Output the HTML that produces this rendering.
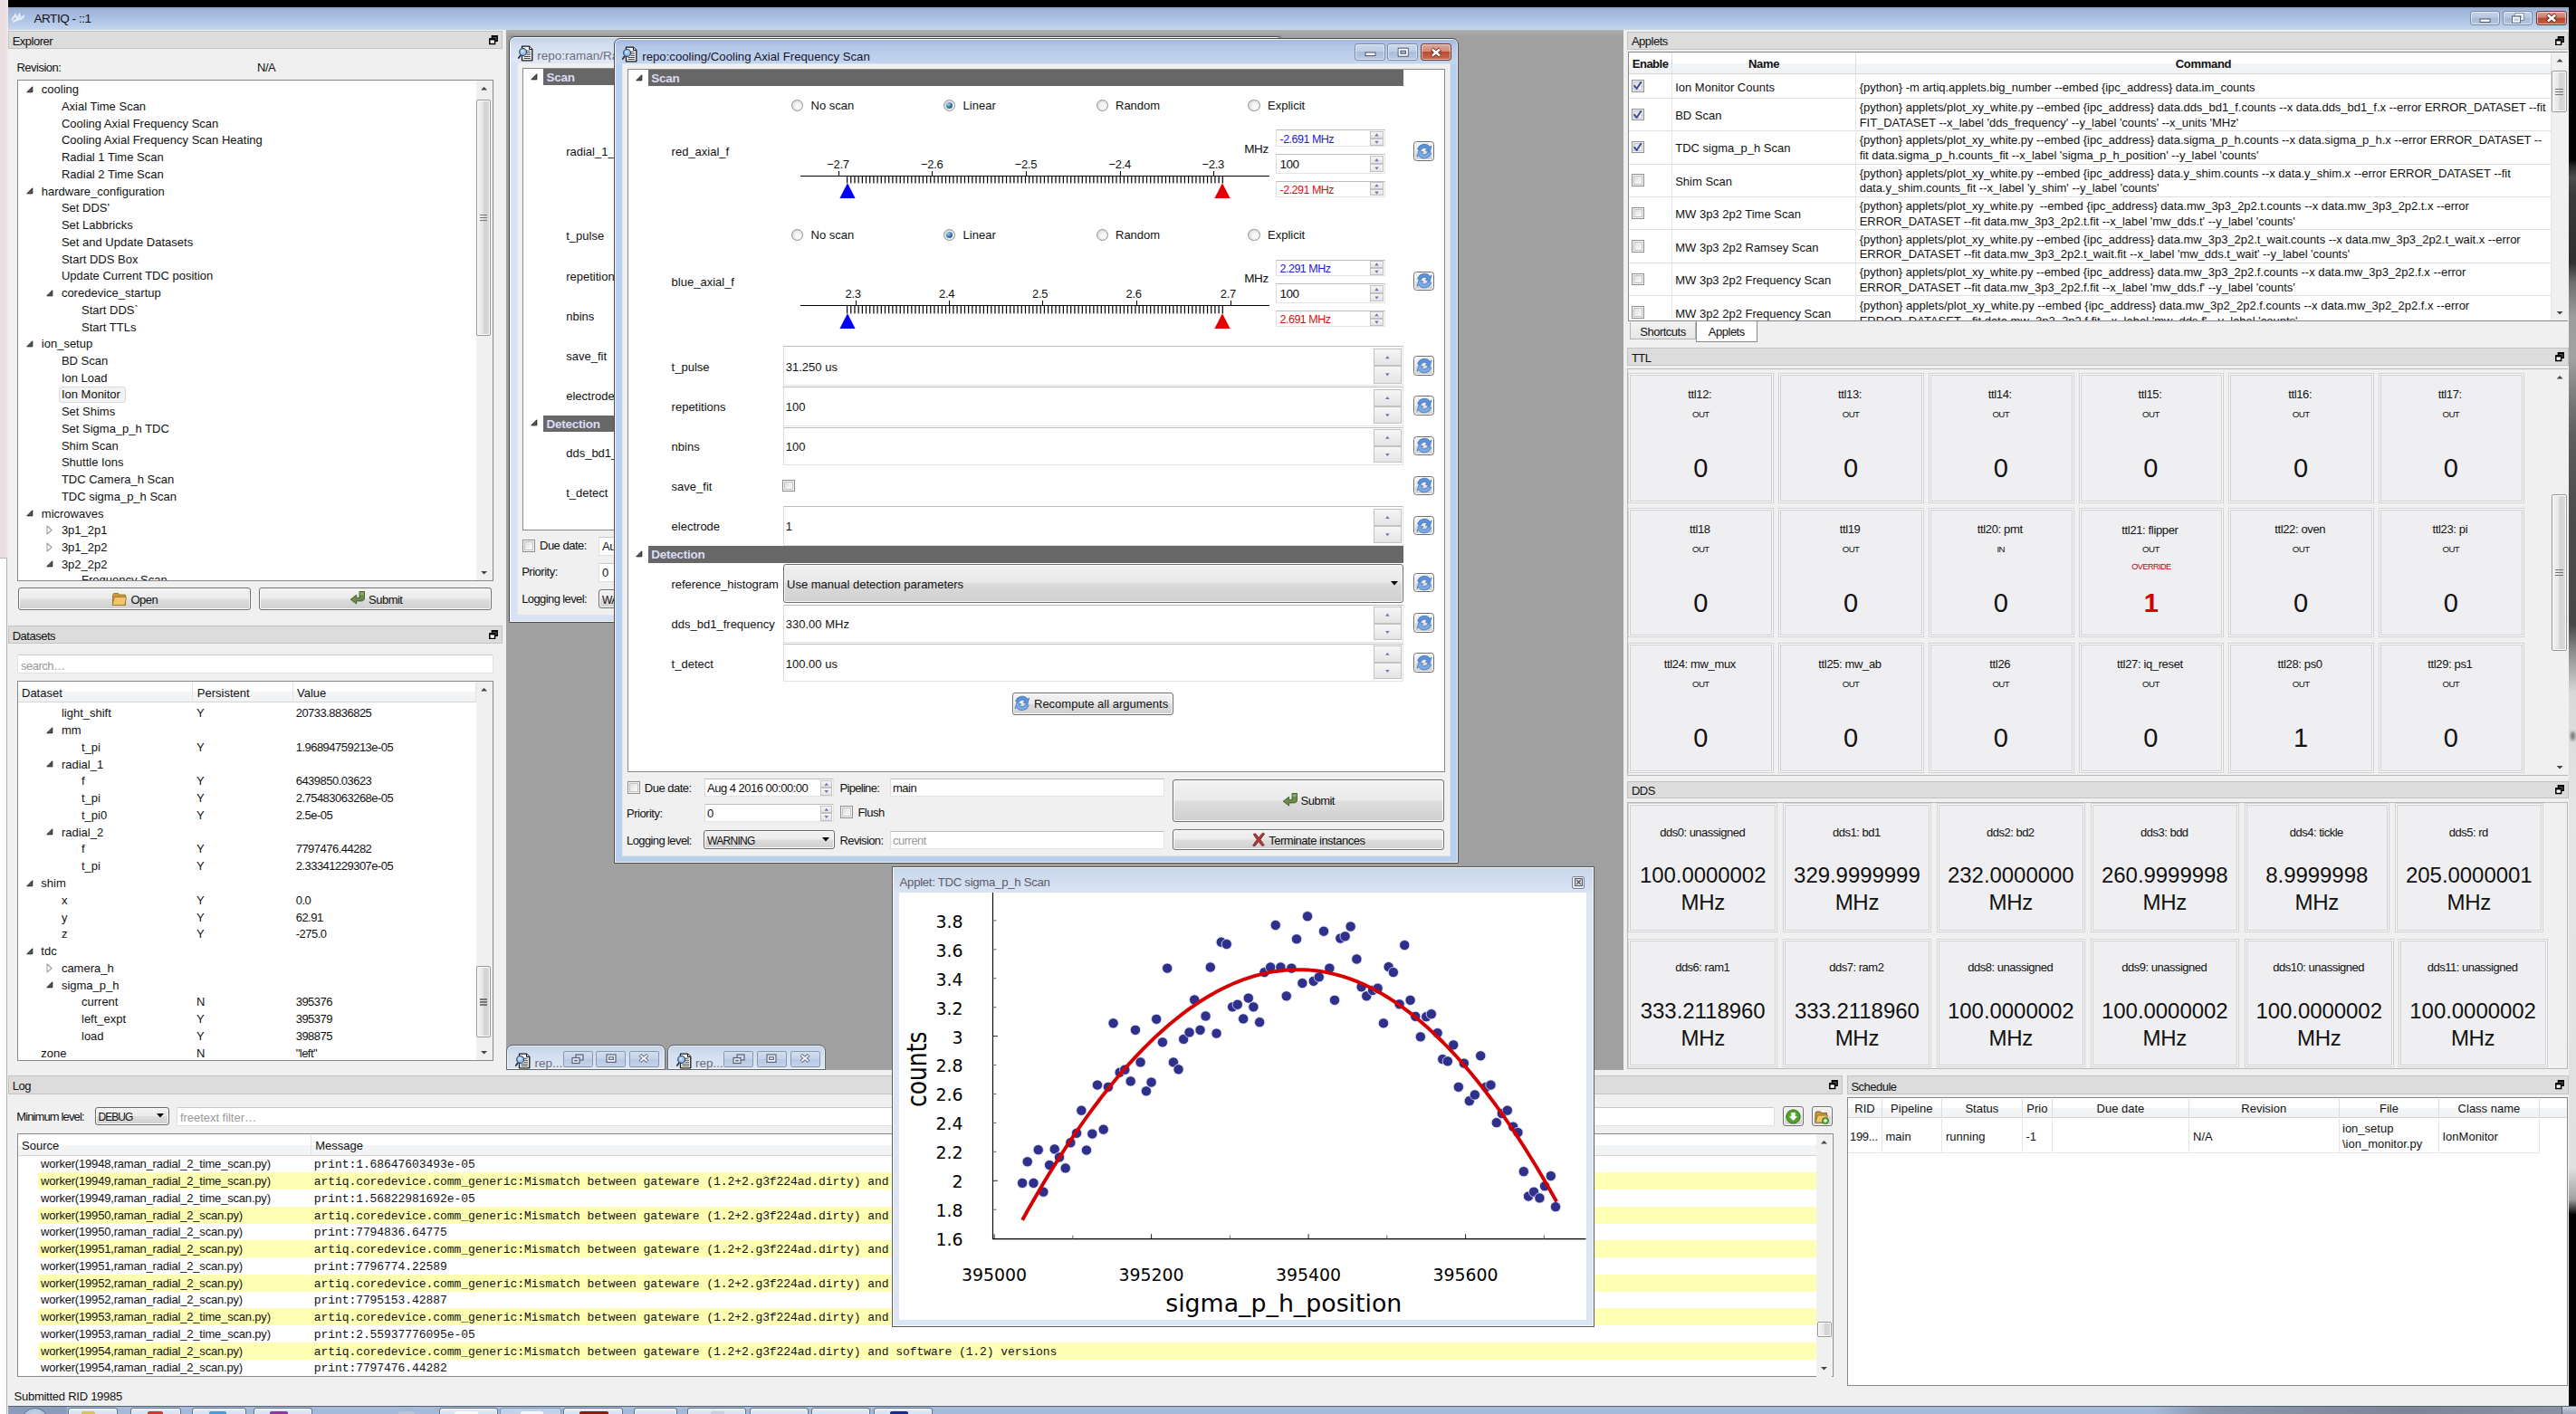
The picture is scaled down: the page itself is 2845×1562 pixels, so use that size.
<!DOCTYPE html><html><head><meta charset="utf-8"><title>ARTIQ - ::1</title><style>
html,body{margin:0;padding:0}
body{width:2845px;height:1562px;overflow:hidden;background:#f0f0f0;position:relative;font-family:"Liberation Sans",sans-serif}
body *{position:absolute;box-sizing:border-box}
svg *{position:static}
span{white-space:pre;line-height:20px;color:#111}
.s{font:13px "Liberation Sans",sans-serif;line-height:20px}
.sb{font:bold 13px "Liberation Sans",sans-serif;line-height:20px}
.t{font:13px "Liberation Sans",sans-serif;line-height:20px;letter-spacing:-0.5px}
.m{font:13px "Liberation Mono",monospace;line-height:20px;letter-spacing:-0.06px;margin-top:1px}
.c{text-align:center}.r{text-align:right}
.pt{font:18.9px "DejaVu Sans","Liberation Sans",sans-serif;fill:#000}
.pl{font:26.8px "DejaVu Sans","Liberation Sans",sans-serif;fill:#000}
</style></head><body><div style="left:9px;top:0px;width:2836px;height:8.3px;background:#000"></div>
<div style="left:0px;top:0px;width:9.2px;height:616.2px;background:linear-gradient(90deg,#ecdfe2 0,#ecdfe2 6.8px,#f0eaec 8.6px,#f0f0f0 9.2px)"></div>
<div style="left:0px;top:616.2px;width:7.6px;height:945.8px;background:#fff;border-top:1px solid #b8b8b8;border-right:1px solid #b0b0b0"></div>
<div style="left:2837px;top:0px;width:8px;height:1562px;background:linear-gradient(#000 0,#000 176px,#262626 183px,#4c4c4c 196px,#3a3a3a 215px,#2e2e2e 290px,#6e6e6e 312px,#9c9c9c 350px,#a2a2a2 395px,#828282 430px,#5e5e5e 480px,#4c4c4c 560px,#474747 690px,#8c8c8c 720px,#d8d8d8 765px,#e6e6e6 900px,#e0e0e0 1290px,#a0a0a0 1325px,#000 1342px,#000 1553px)"></div>
<div style="left:2838.5px;top:808px;width:5px;height:10px;background:#777;border-radius:50%;filter:blur(1.5px)"></div>
<div style="left:9px;top:8.3px;width:2828px;height:24.5px;background:linear-gradient(#8fa2c0 0,#9fb4d6 12%,#a9bfe2 45%,#b6cbe9 75%,#c6d7ee 100%)"></div>
<svg style="left:12px;top:13px;" width="16" height="14" viewBox="0 0 16 14"><path d="M1 9L5 3.5L7 8L9.5 3L11 8L15 4M2 11L14 6" fill="none" stroke="#f4f7fc" stroke-width="1.9" opacity=".8" style="filter:blur(.5px)"/></svg>
<span class="s" style="left:37.5px;top:10.5px;font-size:13.5px;letter-spacing:-0.45px;color:#111">ARTIQ - ::1</span>
<div style="left:2728.4px;top:11.6px;width:32.8px;height:16.6px;border:1px solid #7d8ba6;border-radius:3px;background:linear-gradient(#c5d3e8 0,#b9c9e2 45%,#a5b8d6 50%,#b4c6e0 100%);box-shadow:inset 0 0 0 1px rgba(255,255,255,.55)"></div>
<div style="left:2764.4px;top:11.6px;width:32.8px;height:16.6px;border:1px solid #7d8ba6;border-radius:3px;background:linear-gradient(#c5d3e8 0,#b9c9e2 45%,#a5b8d6 50%,#b4c6e0 100%);box-shadow:inset 0 0 0 1px rgba(255,255,255,.55)"></div>
<div style="left:2801px;top:11.6px;width:33.6px;height:16.6px;border:1px solid #6b3a32;border-radius:3px;background:linear-gradient(#d9a195 0,#cf7f6c 45%,#b9432a 50%,#c5604a 100%);box-shadow:inset 0 0 0 1px rgba(255,255,255,.55)"></div>
<svg style="left:2738px;top:20px;" width="14" height="6" viewBox="0 0 14 6"><rect x="1" y="1" width="11" height="3.4" fill="#fff" stroke="#4a5568" stroke-width="1"/></svg>
<svg style="left:2773px;top:14px;" width="16" height="12" viewBox="0 0 16 12"><rect x="5" y="1" width="9" height="7" fill="none" stroke="#4a5568" stroke-width="1"/><rect x="5.8" y="1.8" width="7.4" height="5.4" fill="none" stroke="#fff" stroke-width="1.4"/><rect x="1.5" y="4" width="9" height="7" fill="#b6c7e0" stroke="#4a5568" stroke-width="1"/><rect x="2.7" y="5.6" width="6.6" height="4.2" fill="none" stroke="#fff" stroke-width="1.6"/></svg>
<svg style="left:2811px;top:14px;" width="14" height="12" viewBox="0 0 14 12"><path d="M2.4 2.2L11.6 9.8M11.6 2.2L2.4 9.8" stroke="#6a2c20" stroke-width="4.4" stroke-linecap="butt"/><path d="M2.9 2.6L11.1 9.4M11.1 2.6L2.9 9.4" stroke="#fff" stroke-width="2.6" stroke-linecap="butt"/></svg>
<div style="left:9.2px;top:34.3px;width:545.4px;height:20.2px;background:#dcdcdc;border:1px solid #c3c3c3"></div>
<span class="t" style="left:13.7px;top:35.7px;">Explorer</span>
<svg style="left:539.8px;top:39.1px;" width="10" height="10.5" viewBox="0 0 10 10.5"><rect x="3.4" y="0.7" width="5.8" height="5.6" fill="#555" stroke="#000" stroke-width="1.4"/><rect x="3.4" y="0.4" width="5.8" height="1.6" fill="#000"/><rect x="0.8" y="3.9" width="5.8" height="5.6" fill="#fff" stroke="#000" stroke-width="1.5"/><rect x="0.8" y="3.4" width="5.8" height="2" fill="#000"/></svg>
<span class="t" style="left:18.4px;top:64.8px;">Revision:</span>
<span class="t" style="left:284px;top:64.8px;">N/A</span>
<div style="left:19.2px;top:88.3px;width:526px;height:553.5px;background:#fff;border:1px solid #868a90;overflow:hidden"></div>
<svg style="left:28.5px;top:95px;" width="8" height="8" viewBox="0 0 8 8"><path d="M6.8 0.8V6.8H0.8Z" fill="#555" stroke="#222" stroke-width="1" stroke-linejoin="round"/></svg>
<span class="s" style="left:45.8px;top:89.3px;">cooling</span>
<span class="s" style="left:67.9px;top:108.03px;">Axial Time Scan</span>
<span class="s" style="left:67.9px;top:126.76px;">Cooling Axial Frequency Scan</span>
<span class="s" style="left:67.9px;top:145.49px;">Cooling Axial Frequency Scan Heating</span>
<span class="s" style="left:67.9px;top:164.22px;">Radial 1 Time Scan</span>
<span class="s" style="left:67.9px;top:182.95px;">Radial 2 Time Scan</span>
<svg style="left:28.5px;top:207.38px;" width="8" height="8" viewBox="0 0 8 8"><path d="M6.8 0.8V6.8H0.8Z" fill="#555" stroke="#222" stroke-width="1" stroke-linejoin="round"/></svg>
<span class="s" style="left:45.8px;top:201.68px;">hardware_configuration</span>
<span class="s" style="left:67.9px;top:220.41px;">Set DDS'</span>
<span class="s" style="left:67.9px;top:239.14px;">Set Labbricks</span>
<span class="s" style="left:67.9px;top:257.87px;">Set and Update Datasets</span>
<span class="s" style="left:67.9px;top:276.6px;">Start DDS Box</span>
<span class="s" style="left:67.9px;top:295.33px;">Update Current TDC position</span>
<svg style="left:50.6px;top:319.76px;" width="8" height="8" viewBox="0 0 8 8"><path d="M6.8 0.8V6.8H0.8Z" fill="#555" stroke="#222" stroke-width="1" stroke-linejoin="round"/></svg>
<span class="s" style="left:67.9px;top:314.06px;">coredevice_startup</span>
<span class="s" style="left:90px;top:332.79px;">Start DDS`</span>
<span class="s" style="left:90px;top:351.52px;">Start TTLs</span>
<svg style="left:28.5px;top:375.95px;" width="8" height="8" viewBox="0 0 8 8"><path d="M6.8 0.8V6.8H0.8Z" fill="#555" stroke="#222" stroke-width="1" stroke-linejoin="round"/></svg>
<span class="s" style="left:45.8px;top:370.25px;">ion_setup</span>
<span class="s" style="left:67.9px;top:388.98px;">BD Scan</span>
<span class="s" style="left:67.9px;top:407.71px;">Ion Load</span>
<div style="left:64.5px;top:427.4px;width:74.5px;height:17.2px;background:#f3f3f3;border:1px solid #dadada;border-radius:3px"></div>
<span class="s" style="left:67.9px;top:426.44px;">Ion Monitor</span>
<span class="s" style="left:67.9px;top:445.17px;">Set Shims</span>
<span class="s" style="left:67.9px;top:463.9px;">Set Sigma_p_h TDC</span>
<span class="s" style="left:67.9px;top:482.63px;">Shim Scan</span>
<span class="s" style="left:67.9px;top:501.36px;">Shuttle Ions</span>
<span class="s" style="left:67.9px;top:520.09px;">TDC Camera_h Scan</span>
<span class="s" style="left:67.9px;top:538.82px;">TDC sigma_p_h Scan</span>
<svg style="left:28.5px;top:563.25px;" width="8" height="8" viewBox="0 0 8 8"><path d="M6.8 0.8V6.8H0.8Z" fill="#555" stroke="#222" stroke-width="1" stroke-linejoin="round"/></svg>
<span class="s" style="left:45.8px;top:557.55px;">microwaves</span>
<svg style="left:51.4px;top:580.48px;" width="7" height="11" viewBox="0 0 7 11"><path d="M1 1L6 5.5L1 10Z" fill="#fff" stroke="#a0a0a0" stroke-width="1.1" stroke-linejoin="round"/></svg>
<span class="s" style="left:67.9px;top:576.28px;">3p1_2p1</span>
<svg style="left:51.4px;top:599.21px;" width="7" height="11" viewBox="0 0 7 11"><path d="M1 1L6 5.5L1 10Z" fill="#fff" stroke="#a0a0a0" stroke-width="1.1" stroke-linejoin="round"/></svg>
<span class="s" style="left:67.9px;top:595.01px;">3p1_2p2</span>
<svg style="left:50.6px;top:619.44px;" width="8" height="8" viewBox="0 0 8 8"><path d="M6.8 0.8V6.8H0.8Z" fill="#555" stroke="#222" stroke-width="1" stroke-linejoin="round"/></svg>
<span class="s" style="left:67.9px;top:613.74px;">3p2_2p2</span>
<div style="left:80px;top:632px;width:200px;height:8.7px;overflow:hidden"><span class="s" style="left:10px;top:-1px">Frequency Scan</span></div>
<div style="left:526.4px;top:89.3px;width:17.8px;height:551.5px;background:#f0f0f0"></div>
<svg style="left:526.4px;top:89.3px;" width="17.8" height="17" viewBox="0 0 17.8 17"><path d="M5.1000000000000005 10.5L8.6 7L12.100000000000001 10.5Z" fill="#444"/></svg>
<svg style="left:526.4px;top:623.8px;" width="17.8" height="17" viewBox="0 0 17.8 17"><path d="M5.1000000000000005 7L8.6 10.5L12.100000000000001 7Z" fill="#444"/></svg>
<div style="left:526.4px;top:109.8px;width:15.4px;height:261.2px;border:1px solid #979797;border-radius:2px;background:linear-gradient(90deg,#f3f3f3,#e6e6e6 45%,#d2d2d2 55%,#dadada);box-shadow:inset 0 0 0 1px #fff"></div>
<div style="left:530.2px;top:236.9px;width:7.8px;height:1.2px;background:#777"></div>
<div style="left:530.2px;top:239.9px;width:7.8px;height:1.2px;background:#777"></div>
<div style="left:530.2px;top:242.9px;width:7.8px;height:1.2px;background:#777"></div>
<div style="left:20.1px;top:649.3px;width:256.7px;height:24.3px;border:1px solid #707070;border-radius:3px;background:linear-gradient(#f2f2f2,#ebebeb 48%,#dddddd 52%,#cfcfcf);box-shadow:inset 0 0 0 1px #fcfcfc;"></div>
<svg style="left:123px;top:652.5px;" width="18" height="17" viewBox="0 0 18 17"><path d="M1.5 4.5l1.2-2h5l1 1.5h6.8v11.5h-14z" fill="#c99a3c" stroke="#8a6a22" stroke-width=".8"/><path d="M1.2 15.5L3.2 6.5h13.3l-1.8 9z" fill="#f0c566" stroke="#9a7424" stroke-width=".8"/></svg>
<span class="t" style="left:144.5px;top:653px;">Open</span>
<div style="left:286.3px;top:649.3px;width:256.9px;height:24.3px;border:1px solid #707070;border-radius:3px;background:linear-gradient(#f2f2f2,#ebebeb 48%,#dddddd 52%,#cfcfcf);box-shadow:inset 0 0 0 1px #fcfcfc;"></div>
<svg style="left:386px;top:652.3px;" width="18" height="17" viewBox="0 0 18 17"><path d="M11 1.5h5.5v7.2c0 2-1.2 3.2-3.2 3.2H7.6v3.2L1.2 10.2l6.4-5v3.2h3.4z" fill="#6b8c4a" stroke="#3f5a28" stroke-width=".9" stroke-linejoin="round"/><path d="M11.6 2.2h4.2v3h-4.2z" fill="#9ab87a" opacity=".7"/></svg>
<span class="t" style="left:407px;top:653px;">Submit</span>
<div style="left:9.2px;top:690.9px;width:545.4px;height:19.7px;background:#dcdcdc;border:1px solid #c3c3c3"></div>
<span class="t" style="left:13.7px;top:692.75px;">Datasets</span>
<svg style="left:539.8px;top:695.7px;" width="10" height="10.5" viewBox="0 0 10 10.5"><rect x="3.4" y="0.7" width="5.8" height="5.6" fill="#555" stroke="#000" stroke-width="1.4"/><rect x="3.4" y="0.4" width="5.8" height="1.6" fill="#000"/><rect x="0.8" y="3.9" width="5.8" height="5.6" fill="#fff" stroke="#000" stroke-width="1.5"/><rect x="0.8" y="3.4" width="5.8" height="2" fill="#000"/></svg>
<div style="left:19.2px;top:723.3px;width:525.8px;height:21.2px;background:#fff;border:1px solid #e0e0e0;border-top-color:#c8c8c8;border-radius:2px"></div>
<span class="t" style="left:23px;top:726px;color:#9a9a9a">search…</span>
<div style="left:19.2px;top:752.2px;width:526px;height:419.7px;background:#fff;border:1px solid #868a90"></div>
<div style="left:20.2px;top:753.2px;width:506px;height:23.2px;background:linear-gradient(#fff,#fff 50%,#f4f5f7 51%,#f1f2f4);border-bottom:1px solid #d5d5d5"></div>
<div style="left:212px;top:754px;width:1px;height:22px;background:#e3e4e6"></div>
<div style="left:323.3px;top:754px;width:1px;height:22px;background:#e3e4e6"></div>
<div style="left:524.5px;top:754px;width:1px;height:22px;background:#e3e4e6"></div>
<span class="s" style="left:24px;top:756px;">Dataset</span>
<span class="s" style="left:217.8px;top:756px;">Persistent</span>
<span class="s" style="left:328px;top:756px;">Value</span>
<span class="s" style="left:67.9px;top:778.4px;">light_shift</span>
<span class="s" style="left:217px;top:778.4px;">Y</span>
<span class="s" style="left:326.7px;top:778.4px;letter-spacing:-0.52px">20733.8836825</span>
<svg style="left:50.6px;top:802.86px;" width="8" height="8" viewBox="0 0 8 8"><path d="M6.8 0.8V6.8H0.8Z" fill="#555" stroke="#222" stroke-width="1" stroke-linejoin="round"/></svg>
<span class="s" style="left:67.9px;top:797.16px;">mm</span>
<span class="s" style="left:90px;top:815.92px;">t_pi</span>
<span class="s" style="left:217px;top:815.92px;">Y</span>
<span class="s" style="left:326.7px;top:815.92px;letter-spacing:-0.52px">1.96894759213e-05</span>
<svg style="left:50.6px;top:840.38px;" width="8" height="8" viewBox="0 0 8 8"><path d="M6.8 0.8V6.8H0.8Z" fill="#555" stroke="#222" stroke-width="1" stroke-linejoin="round"/></svg>
<span class="s" style="left:67.9px;top:834.68px;">radial_1</span>
<span class="s" style="left:90px;top:853.44px;">f</span>
<span class="s" style="left:217px;top:853.44px;">Y</span>
<span class="s" style="left:326.7px;top:853.44px;letter-spacing:-0.52px">6439850.03623</span>
<span class="s" style="left:90px;top:872.2px;">t_pi</span>
<span class="s" style="left:217px;top:872.2px;">Y</span>
<span class="s" style="left:326.7px;top:872.2px;letter-spacing:-0.52px">2.75483063268e-05</span>
<span class="s" style="left:90px;top:890.96px;">t_pi0</span>
<span class="s" style="left:217px;top:890.96px;">Y</span>
<span class="s" style="left:326.7px;top:890.96px;letter-spacing:-0.52px">2.5e-05</span>
<svg style="left:50.6px;top:915.42px;" width="8" height="8" viewBox="0 0 8 8"><path d="M6.8 0.8V6.8H0.8Z" fill="#555" stroke="#222" stroke-width="1" stroke-linejoin="round"/></svg>
<span class="s" style="left:67.9px;top:909.72px;">radial_2</span>
<span class="s" style="left:90px;top:928.48px;">f</span>
<span class="s" style="left:217px;top:928.48px;">Y</span>
<span class="s" style="left:326.7px;top:928.48px;letter-spacing:-0.52px">7797476.44282</span>
<span class="s" style="left:90px;top:947.24px;">t_pi</span>
<span class="s" style="left:217px;top:947.24px;">Y</span>
<span class="s" style="left:326.7px;top:947.24px;letter-spacing:-0.52px">2.33341229307e-05</span>
<svg style="left:28.5px;top:971.7px;" width="8" height="8" viewBox="0 0 8 8"><path d="M6.8 0.8V6.8H0.8Z" fill="#555" stroke="#222" stroke-width="1" stroke-linejoin="round"/></svg>
<span class="s" style="left:45.3px;top:966px;">shim</span>
<span class="s" style="left:67.9px;top:984.76px;">x</span>
<span class="s" style="left:217px;top:984.76px;">Y</span>
<span class="s" style="left:326.7px;top:984.76px;letter-spacing:-0.52px">0.0</span>
<span class="s" style="left:67.9px;top:1003.52px;">y</span>
<span class="s" style="left:217px;top:1003.52px;">Y</span>
<span class="s" style="left:326.7px;top:1003.52px;letter-spacing:-0.52px">62.91</span>
<span class="s" style="left:67.9px;top:1022.28px;">z</span>
<span class="s" style="left:217px;top:1022.28px;">Y</span>
<span class="s" style="left:326.7px;top:1022.28px;letter-spacing:-0.52px">-275.0</span>
<svg style="left:28.5px;top:1046.74px;" width="8" height="8" viewBox="0 0 8 8"><path d="M6.8 0.8V6.8H0.8Z" fill="#555" stroke="#222" stroke-width="1" stroke-linejoin="round"/></svg>
<span class="s" style="left:45.3px;top:1041.04px;">tdc</span>
<svg style="left:51.4px;top:1064px;" width="7" height="11" viewBox="0 0 7 11"><path d="M1 1L6 5.5L1 10Z" fill="#fff" stroke="#a0a0a0" stroke-width="1.1" stroke-linejoin="round"/></svg>
<span class="s" style="left:67.9px;top:1059.8px;">camera_h</span>
<svg style="left:50.6px;top:1084.26px;" width="8" height="8" viewBox="0 0 8 8"><path d="M6.8 0.8V6.8H0.8Z" fill="#555" stroke="#222" stroke-width="1" stroke-linejoin="round"/></svg>
<span class="s" style="left:67.9px;top:1078.56px;">sigma_p_h</span>
<span class="s" style="left:90px;top:1097.32px;">current</span>
<span class="s" style="left:217px;top:1097.32px;">N</span>
<span class="s" style="left:326.7px;top:1097.32px;letter-spacing:-0.52px">395376</span>
<span class="s" style="left:90px;top:1116.08px;">left_expt</span>
<span class="s" style="left:217px;top:1116.08px;">Y</span>
<span class="s" style="left:326.7px;top:1116.08px;letter-spacing:-0.52px">395379</span>
<span class="s" style="left:90px;top:1134.84px;">load</span>
<span class="s" style="left:217px;top:1134.84px;">Y</span>
<span class="s" style="left:326.7px;top:1134.84px;letter-spacing:-0.52px">398875</span>
<span class="s" style="left:45.3px;top:1153.6px;">zone</span>
<span class="s" style="left:217px;top:1153.6px;">N</span>
<span class="s" style="left:326.7px;top:1153.6px;letter-spacing:-0.52px">"left"</span>
<div style="left:526.4px;top:753.2px;width:17.8px;height:417.7px;background:#f0f0f0"></div>
<svg style="left:526.4px;top:753.2px;" width="17.8" height="17" viewBox="0 0 17.8 17"><path d="M5.1000000000000005 10.5L8.6 7L12.100000000000001 10.5Z" fill="#444"/></svg>
<svg style="left:526.4px;top:1153.9px;" width="17.8" height="17" viewBox="0 0 17.8 17"><path d="M5.1000000000000005 7L8.6 10.5L12.100000000000001 7Z" fill="#444"/></svg>
<div style="left:526.4px;top:1067.3px;width:15.4px;height:79.2px;border:1px solid #979797;border-radius:2px;background:linear-gradient(90deg,#f3f3f3,#e6e6e6 45%,#d2d2d2 55%,#dadada);box-shadow:inset 0 0 0 1px #fff"></div>
<div style="left:530.2px;top:1103.4px;width:7.8px;height:1.2px;background:#777"></div>
<div style="left:530.2px;top:1106.4px;width:7.8px;height:1.2px;background:#777"></div>
<div style="left:530.2px;top:1109.4px;width:7.8px;height:1.2px;background:#777"></div>
<div style="left:9.2px;top:1188.2px;width:2025.8px;height:20.4px;background:#dcdcdc;border:1px solid #c3c3c3"></div>
<span class="t" style="left:13.7px;top:1190.4px;">Log</span>
<svg style="left:2020.2px;top:1193px;" width="10" height="10.5" viewBox="0 0 10 10.5"><rect x="3.4" y="0.7" width="5.8" height="5.6" fill="#555" stroke="#000" stroke-width="1.4"/><rect x="3.4" y="0.4" width="5.8" height="1.6" fill="#000"/><rect x="0.8" y="3.9" width="5.8" height="5.6" fill="#fff" stroke="#000" stroke-width="1.5"/><rect x="0.8" y="3.4" width="5.8" height="2" fill="#000"/></svg>
<span class="t" style="left:18.2px;top:1223.6px;letter-spacing:-0.87px">Minimum level:</span>
<div style="left:104.8px;top:1222.7px;width:82.7px;height:20.8px;border:1px solid #707070;border-radius:3px;background:linear-gradient(#f2f2f2,#ebebeb 48%,#dddddd 52%,#cfcfcf);box-shadow:inset 0 0 0 1px #fcfcfc;border-color:#6a6a6a"></div>
<span class="t" style="left:108.5px;top:1223.8px;font-size:12px;letter-spacing:-0.95px">DEBUG</span>
<svg style="left:173px;top:1230px;" width="8" height="5" viewBox="0 0 8 5"><path d="M0 0H8L4 4.6Z" fill="#000"/></svg>
<div style="left:195.3px;top:1223.3px;width:1764.3px;height:20.5px;background:#fff;border:1px solid #e0e0e0;border-top-color:#c8c8c8;border-radius:2px"></div>
<span class="t" style="left:199px;top:1224.9px;color:#9a9a9a;letter-spacing:-0.04px">freetext filter…</span>
<div style="left:1969px;top:1222.3px;width:22.6px;height:21.7px;border:1px solid #707070;border-radius:3px;background:linear-gradient(#f2f2f2,#ebebeb 48%,#dddddd 52%,#cfcfcf);box-shadow:inset 0 0 0 1px #fcfcfc;"></div>
<svg style="left:1971.8px;top:1224.6px;" width="17" height="17" viewBox="0 0 17 17"><circle cx="8.5" cy="8.5" r="7.6" fill="#4fa52c" stroke="#2b6b14" stroke-width="1"/><path d="M6.3 4h4.4v4.2h2.5L8.5 13L3.8 8.2h2.5z" fill="#fff"/></svg>
<div style="left:2000.8px;top:1222.3px;width:22.8px;height:21.7px;border:1px solid #707070;border-radius:3px;background:linear-gradient(#f2f2f2,#ebebeb 48%,#dddddd 52%,#cfcfcf);box-shadow:inset 0 0 0 1px #fcfcfc;"></div>
<svg style="left:2003px;top:1224.5px;" width="18" height="18" viewBox="0 0 18 18"><path d="M2 5l1-2h4.5l1 1.5h6v10.5h-12.5z" fill="#c99a3c" stroke="#7a5a1a" stroke-width=".9"/><path d="M2 15L4.5 7h11L13 15z" fill="#f0c566" stroke="#8a6a22" stroke-width=".8"/><circle cx="13" cy="13" r="3.6" fill="#4fa52c" stroke="#2b6b14" stroke-width=".7"/><path d="M13 10.8v4.4M10.8 13h4.4" stroke="#fff" stroke-width="1.3"/></svg>
<div style="left:19.4px;top:1252.2px;width:2005.8px;height:268.8px;background:#fff;border:1px solid #868a90"></div>
<div style="left:20.4px;top:1253.2px;width:1985.9px;height:23.8px;background:linear-gradient(#fff,#fff 50%,#f4f5f7 51%,#f1f2f4);border-bottom:1px solid #d5d5d5"></div>
<div style="left:343.2px;top:1254px;width:1px;height:22px;background:#e3e4e6"></div>
<span class="s" style="left:24px;top:1255.8px;">Source</span>
<span class="s" style="left:348.2px;top:1255.8px;">Message</span>
<span class="s" style="left:45px;top:1276.3px;letter-spacing:-0.19px">worker(19948,raman_radial_2_time_scan.py)</span>
<span class="m" style="left:346.7px;top:1276.3px;">print:1.68647603493e-05</span>
<div style="left:42px;top:1295.36px;width:1963.5px;height:18.8px;background:#ffffb3"></div>
<span class="s" style="left:45px;top:1295.06px;letter-spacing:-0.19px">worker(19949,raman_radial_2_time_scan.py)</span>
<span class="m" style="left:346.7px;top:1295.06px;">artiq.coredevice.comm_generic:Mismatch between gateware (1.2+2.g3f224ad.dirty) and software (1.2) versions</span>
<span class="s" style="left:45px;top:1313.82px;letter-spacing:-0.19px">worker(19949,raman_radial_2_time_scan.py)</span>
<span class="m" style="left:346.7px;top:1313.82px;">print:1.56822981692e-05</span>
<div style="left:42px;top:1332.88px;width:1963.5px;height:18.8px;background:#ffffb3"></div>
<span class="s" style="left:45px;top:1332.58px;letter-spacing:-0.19px">worker(19950,raman_radial_2_scan.py)</span>
<span class="m" style="left:346.7px;top:1332.58px;">artiq.coredevice.comm_generic:Mismatch between gateware (1.2+2.g3f224ad.dirty) and software (1.2) versions</span>
<span class="s" style="left:45px;top:1351.34px;letter-spacing:-0.19px">worker(19950,raman_radial_2_scan.py)</span>
<span class="m" style="left:346.7px;top:1351.34px;">print:7794836.64775</span>
<div style="left:42px;top:1370.4px;width:1963.5px;height:18.8px;background:#ffffb3"></div>
<span class="s" style="left:45px;top:1370.1px;letter-spacing:-0.19px">worker(19951,raman_radial_2_scan.py)</span>
<span class="m" style="left:346.7px;top:1370.1px;">artiq.coredevice.comm_generic:Mismatch between gateware (1.2+2.g3f224ad.dirty) and software (1.2) versions</span>
<span class="s" style="left:45px;top:1388.86px;letter-spacing:-0.19px">worker(19951,raman_radial_2_scan.py)</span>
<span class="m" style="left:346.7px;top:1388.86px;">print:7796774.22589</span>
<div style="left:42px;top:1407.92px;width:1963.5px;height:18.8px;background:#ffffb3"></div>
<span class="s" style="left:45px;top:1407.62px;letter-spacing:-0.19px">worker(19952,raman_radial_2_scan.py)</span>
<span class="m" style="left:346.7px;top:1407.62px;">artiq.coredevice.comm_generic:Mismatch between gateware (1.2+2.g3f224ad.dirty) and software (1.2) versions</span>
<span class="s" style="left:45px;top:1426.38px;letter-spacing:-0.19px">worker(19952,raman_radial_2_scan.py)</span>
<span class="m" style="left:346.7px;top:1426.38px;">print:7795153.42887</span>
<div style="left:42px;top:1445.44px;width:1963.5px;height:18.8px;background:#ffffb3"></div>
<span class="s" style="left:45px;top:1445.14px;letter-spacing:-0.19px">worker(19953,raman_radial_2_time_scan.py)</span>
<span class="m" style="left:346.7px;top:1445.14px;">artiq.coredevice.comm_generic:Mismatch between gateware (1.2+2.g3f224ad.dirty) and software (1.2) versions</span>
<span class="s" style="left:45px;top:1463.9px;letter-spacing:-0.19px">worker(19953,raman_radial_2_time_scan.py)</span>
<span class="m" style="left:346.7px;top:1463.9px;">print:2.55937776095e-05</span>
<div style="left:42px;top:1482.96px;width:1963.5px;height:18.8px;background:#ffffb3"></div>
<span class="s" style="left:45px;top:1482.66px;letter-spacing:-0.19px">worker(19954,raman_radial_2_scan.py)</span>
<span class="m" style="left:346.7px;top:1482.66px;">artiq.coredevice.comm_generic:Mismatch between gateware (1.2+2.g3f224ad.dirty) and software (1.2) versions</span>
<span class="s" style="left:45px;top:1501.42px;letter-spacing:-0.19px">worker(19954,raman_radial_2_scan.py)</span>
<span class="m" style="left:346.7px;top:1501.42px;">print:7797476.44282</span>
<div style="left:2006.3px;top:1253.2px;width:17px;height:1266.8px;background:#f0f0f0"></div>
<svg style="left:2006.3px;top:1253.2px;" width="17" height="17" viewBox="0 0 17 17"><path d="M5 10.5L8.5 7L12 10.5Z" fill="#444"/></svg>
<svg style="left:2006.3px;top:1503px;" width="17" height="17" viewBox="0 0 17 17"><path d="M5 7L8.5 10.5L12 7Z" fill="#444"/></svg>
<div style="left:2006.8px;top:1459.5px;width:16px;height:17.5px;border:1px solid #979797;border-radius:2px;background:linear-gradient(90deg,#f3f3f3,#e6e6e6 45%,#d2d2d2 55%,#dadada);box-shadow:inset 0 0 0 1px #fff"></div>
<span class="t" style="left:15.5px;top:1532.5px;letter-spacing:-0.25px">Submitted RID 19985</span>
<div style="left:2039.9px;top:1188.3px;width:797.1px;height:20.4px;background:#dcdcdc;border:1px solid #c3c3c3"></div>
<span class="t" style="left:2044.4px;top:1190.5px;">Schedule</span>
<svg style="left:2822.2px;top:1193.1px;" width="10" height="10.5" viewBox="0 0 10 10.5"><rect x="3.4" y="0.7" width="5.8" height="5.6" fill="#555" stroke="#000" stroke-width="1.4"/><rect x="3.4" y="0.4" width="5.8" height="1.6" fill="#000"/><rect x="0.8" y="3.9" width="5.8" height="5.6" fill="#fff" stroke="#000" stroke-width="1.5"/><rect x="0.8" y="3.4" width="5.8" height="2" fill="#000"/></svg>
<div style="left:2040.3px;top:1211.9px;width:796px;height:319px;background:#fff;border:1px solid #868a90"></div>
<div style="left:2041.3px;top:1212.9px;width:794px;height:22.6px;background:linear-gradient(#fff,#fff 50%,#f4f5f7 51%,#f1f2f4);border-bottom:1px solid #d5d5d5"></div>
<span class="s c" style="left:1759.5px;width:600px;top:1215.3px;">RID</span>
<div style="left:2077.5px;top:1213.5px;width:1px;height:21.5px;background:#dcdde0"></div>
<div style="left:2077.5px;top:1236.4px;width:1px;height:36.6px;background:#e6e6e6"></div>
<span class="s c" style="left:1811.25px;width:600px;top:1215.3px;">Pipeline</span>
<div style="left:2144px;top:1213.5px;width:1px;height:21.5px;background:#dcdde0"></div>
<div style="left:2144px;top:1236.4px;width:1px;height:36.6px;background:#e6e6e6"></div>
<span class="s c" style="left:1888.9px;width:600px;top:1215.3px;">Status</span>
<div style="left:2232.8px;top:1213.5px;width:1px;height:21.5px;background:#dcdde0"></div>
<div style="left:2232.8px;top:1236.4px;width:1px;height:36.6px;background:#e6e6e6"></div>
<span class="s c" style="left:1949.9px;width:600px;top:1215.3px;">Prio</span>
<div style="left:2266px;top:1213.5px;width:1px;height:21.5px;background:#dcdde0"></div>
<div style="left:2266px;top:1236.4px;width:1px;height:36.6px;background:#e6e6e6"></div>
<span class="s c" style="left:2041.95px;width:600px;top:1215.3px;">Due date</span>
<div style="left:2416.9px;top:1213.5px;width:1px;height:21.5px;background:#dcdde0"></div>
<div style="left:2416.9px;top:1236.4px;width:1px;height:36.6px;background:#e6e6e6"></div>
<span class="s c" style="left:2200.3px;width:600px;top:1215.3px;">Revision</span>
<div style="left:2582.7px;top:1213.5px;width:1px;height:21.5px;background:#dcdde0"></div>
<div style="left:2582.7px;top:1236.4px;width:1px;height:36.6px;background:#e6e6e6"></div>
<span class="s c" style="left:2338.45px;width:600px;top:1215.3px;">File</span>
<div style="left:2693.2px;top:1213.5px;width:1px;height:21.5px;background:#dcdde0"></div>
<div style="left:2693.2px;top:1236.4px;width:1px;height:36.6px;background:#e6e6e6"></div>
<span class="s c" style="left:2448.95px;width:600px;top:1215.3px;">Class name</span>
<div style="left:2803.7px;top:1213.5px;width:1px;height:21.5px;background:#dcdde0"></div>
<div style="left:2803.7px;top:1236.4px;width:1px;height:36.6px;background:#e6e6e6"></div>
<div style="left:2041.3px;top:1272.6px;width:763.4px;height:1px;background:#e6e6e6"></div>
<span class="s" style="left:2043px;top:1245.9px;letter-spacing:-0.3px">199...</span>
<span class="s" style="left:2082.5px;top:1245.9px;">main</span>
<span class="s" style="left:2149px;top:1245.9px;">running</span>
<span class="s" style="left:2237.5px;top:1245.9px;">-1</span>
<span class="s" style="left:2422px;top:1245.9px;">N/A</span>
<span class="s" style="left:2587px;top:1237.3px;">ion_setup</span>
<span class="s" style="left:2587px;top:1254.1px;">\ion_monitor.py</span>
<span class="s" style="left:2697.5px;top:1245.9px;">IonMonitor</span>
<div style="left:9px;top:1553px;width:2836px;height:9px;background:#a5b9d8;border-top:1px solid #55637a"></div>
<div style="left:2380px;top:1554px;width:465px;height:8px;background:linear-gradient(90deg,rgba(140,150,170,0),#8c97ab 12%,#7c8596 60%,#8b94a5)"></div>
<div style="left:2829px;top:1554px;width:16px;height:8px;background:linear-gradient(#c8d0dc,#9aa6b8);border-left:1px solid #4a5568"></div>
<div style="left:9px;top:1554px;width:65px;height:8px;background:#8a9cb9"></div>
<div style="left:23px;top:1555px;width:31px;height:31px;border-radius:50%;border:1px solid #5e6f8a;background:radial-gradient(circle at 50% 30%,#c5d6ea,#8fa8c8)"></div>
<div style="left:74.7px;top:1554.5px;width:55.7px;height:15.5px;border:1px solid #5e6f8a;border-radius:3px 3px 0 0;background:linear-gradient(#e3ebf6,#cbd9ec);box-shadow:inset 0 0 0 1px rgba(255,255,255,.6)"></div>
<div style="left:144px;top:1554.5px;width:55.7px;height:15.5px;border:1px solid #5e6f8a;border-radius:3px 3px 0 0;background:linear-gradient(#e3ebf6,#cbd9ec);box-shadow:inset 0 0 0 1px rgba(255,255,255,.6)"></div>
<div style="left:212px;top:1554.5px;width:59.7px;height:15.5px;border:1px solid #5e6f8a;border-radius:3px 3px 0 0;background:linear-gradient(#e3ebf6,#cbd9ec);box-shadow:inset 0 0 0 1px rgba(255,255,255,.6)"></div>
<div style="left:280px;top:1554.5px;width:65px;height:15.5px;border:1px solid #5e6f8a;border-radius:3px 3px 0 0;background:linear-gradient(#e3ebf6,#cbd9ec);box-shadow:inset 0 0 0 1px rgba(255,255,255,.6)"></div>
<div style="left:485px;top:1554.5px;width:65px;height:15.5px;border:1px solid #5e6f8a;border-radius:3px 3px 0 0;background:linear-gradient(#e3ebf6,#cbd9ec);box-shadow:inset 0 0 0 1px rgba(255,255,255,.6)"></div>
<div style="left:622px;top:1554.5px;width:65.5px;height:15.5px;border:1px solid #5e6f8a;border-radius:3px 3px 0 0;background:linear-gradient(#e3ebf6,#cbd9ec);box-shadow:inset 0 0 0 1px rgba(255,255,255,.6)"></div>
<div style="left:700px;top:1554.5px;width:47.5px;height:15.5px;border:1px solid #5e6f8a;border-radius:3px 3px 0 0;background:linear-gradient(#e3ebf6,#cbd9ec);box-shadow:inset 0 0 0 1px rgba(255,255,255,.6)"></div>
<div style="left:759px;top:1554.5px;width:65px;height:15.5px;border:1px solid #5e6f8a;border-radius:3px 3px 0 0;background:linear-gradient(#e3ebf6,#cbd9ec);box-shadow:inset 0 0 0 1px rgba(255,255,255,.6)"></div>
<div style="left:827.7px;top:1554.5px;width:65.8px;height:15.5px;border:1px solid #5e6f8a;border-radius:3px 3px 0 0;background:linear-gradient(#e3ebf6,#cbd9ec);box-shadow:inset 0 0 0 1px rgba(255,255,255,.6)"></div>
<div style="left:896px;top:1554.5px;width:65.4px;height:15.5px;border:1px solid #5e6f8a;border-radius:3px 3px 0 0;background:linear-gradient(#e3ebf6,#cbd9ec);box-shadow:inset 0 0 0 1px rgba(255,255,255,.6)"></div>
<div style="left:965px;top:1554.5px;width:65px;height:15.5px;border:1px solid #5e6f8a;border-radius:3px 3px 0 0;background:linear-gradient(#e3ebf6,#cbd9ec);box-shadow:inset 0 0 0 1px rgba(255,255,255,.6)"></div>
<div style="left:552px;top:1554.5px;width:68px;height:15.5px;border:1px solid #7f93b3;border-radius:3px 3px 0 0;background:#c2d2ea"></div>
<div style="left:90px;top:1559px;width:15px;height:6px;background:#d9c060;border-radius:2px 2px 0 0"></div>
<div style="left:163px;top:1559px;width:17px;height:6px;background:#cc3a30;border-radius:2px 2px 0 0"></div>
<div style="left:231px;top:1559px;width:19px;height:6px;background:#4a9ad8;border-radius:2px 2px 0 0"></div>
<div style="left:298px;top:1559px;width:20px;height:6px;background:#8a3a9a;border-radius:2px 2px 0 0"></div>
<div style="left:440px;top:1559px;width:18px;height:6px;background:#b8c4d4;border-radius:2px 2px 0 0"></div>
<div style="left:502px;top:1559px;width:26px;height:6px;background:#fafafa;border-radius:2px 2px 0 0"></div>
<div style="left:575px;top:1559px;width:25px;height:6px;background:#f4f6fa;border-radius:2px 2px 0 0"></div>
<div style="left:640px;top:1559px;width:32px;height:6px;background:#8a1a14;border-radius:2px 2px 0 0"></div>
<div style="left:785px;top:1559px;width:15px;height:6px;background:#c8d0dc;border-radius:2px 2px 0 0"></div>
<div style="left:983px;top:1559px;width:20px;height:6px;background:#1a2a8a;border-radius:2px 2px 0 0"></div>
<div style="left:1797.4px;top:34.8px;width:1039.6px;height:19.8px;background:#dcdcdc;border:1px solid #c3c3c3"></div>
<span class="t" style="left:1801.9px;top:36px;">Applets</span>
<svg style="left:2822.2px;top:39.6px;" width="10" height="10.5" viewBox="0 0 10 10.5"><rect x="3.4" y="0.7" width="5.8" height="5.6" fill="#555" stroke="#000" stroke-width="1.4"/><rect x="3.4" y="0.4" width="5.8" height="1.6" fill="#000"/><rect x="0.8" y="3.9" width="5.8" height="5.6" fill="#fff" stroke="#000" stroke-width="1.5"/><rect x="0.8" y="3.4" width="5.8" height="2" fill="#000"/></svg>
<div style="left:1798.2px;top:56.8px;width:1038.1px;height:298.2px;background:#fff;border:1px solid #868a90;overflow:hidden"></div>
<div style="left:1799.2px;top:57.8px;width:1018.8px;height:23.8px;background:linear-gradient(#fff,#fff 50%,#f4f5f7 51%,#f1f2f4);border-bottom:1px solid #d5d5d5"></div>
<div style="left:1845.6px;top:58.5px;width:1px;height:22.5px;background:#dcdde0"></div>
<div style="left:2048.7px;top:58.5px;width:1px;height:22.5px;background:#dcdde0"></div>
<div style="left:2816.5px;top:58.5px;width:1px;height:22.5px;background:#dcdde0"></div>
<span class="sb c" style="left:1522.6px;width:600px;top:60.9px;letter-spacing:-0.5px">Enable</span>
<span class="sb c" style="left:1648px;width:600px;top:60.9px;letter-spacing:-0.3px">Name</span>
<span class="sb c" style="left:2133.5px;width:600px;top:60.9px;letter-spacing:-0.3px">Command</span>
<div style="left:1799.2px;top:107.6px;width:1018.3px;height:1px;background:#dfdfdf"></div>
<div style="left:1845.6px;top:81.8px;width:1px;height:26.4px;background:#e6e6e6"></div>
<div style="left:2048.7px;top:81.8px;width:1px;height:26.4px;background:#e6e6e6"></div>
<div style="left:2816.5px;top:81.8px;width:1px;height:26.4px;background:#e6e6e6"></div>
<div style="left:1802.4px;top:88.1px;width:13.5px;height:13.5px;border:1px solid #8e8f8f;background:linear-gradient(135deg,#d8d8d8,#f6f6f6 70%);box-shadow:inset 0 0 0 1px #f4f4f4, inset 0 0 0 2px #c4c4c4"></div>
<svg style="left:1802.4px;top:88.1px;" width="13.5" height="13.5" viewBox="0 0 13.5 13.5"><path d="M3.2 6.8L5.6 10L10.3 2.8" fill="none" stroke="#3a4aa8" stroke-width="2" stroke-linecap="round" stroke-linejoin="round"/></svg>
<span class="s" style="left:1850.2px;top:87.1px;">Ion Monitor Counts</span>
<span class="s" style="left:2053.7px;top:86.9px;letter-spacing:-0.035px">{python} -m artiq.applets.big_number --embed {ipc_address} data.im_counts</span>
<div style="left:1799.2px;top:144.05px;width:1018.3px;height:1px;background:#dfdfdf"></div>
<div style="left:1845.6px;top:108.2px;width:1px;height:36.45px;background:#e6e6e6"></div>
<div style="left:2048.7px;top:108.2px;width:1px;height:36.45px;background:#e6e6e6"></div>
<div style="left:2816.5px;top:108.2px;width:1px;height:36.45px;background:#e6e6e6"></div>
<div style="left:1802.4px;top:119.52px;width:13.5px;height:13.5px;border:1px solid #8e8f8f;background:linear-gradient(135deg,#d8d8d8,#f6f6f6 70%);box-shadow:inset 0 0 0 1px #f4f4f4, inset 0 0 0 2px #c4c4c4"></div>
<svg style="left:1802.4px;top:119.52px;" width="13.5" height="13.5" viewBox="0 0 13.5 13.5"><path d="M3.2 6.8L5.6 10L10.3 2.8" fill="none" stroke="#3a4aa8" stroke-width="2" stroke-linecap="round" stroke-linejoin="round"/></svg>
<span class="s" style="left:1850.2px;top:117.72px;">BD Scan</span>
<span class="s" style="left:2053.7px;top:108.72px;letter-spacing:-0.035px">{python} applets/plot_xy_white.py --embed {ipc_address} data.dds_bd1_f.counts --x data.dds_bd1_f.x --error ERROR_DATASET --fit</span>
<span class="s" style="left:2053.7px;top:125.52px;letter-spacing:-0.035px">FIT_DATASET --x_label 'dds_frequency' --y_label 'counts' --x_units 'MHz'</span>
<div style="left:1799.2px;top:180.5px;width:1018.3px;height:1px;background:#dfdfdf"></div>
<div style="left:1845.6px;top:144.65px;width:1px;height:36.45px;background:#e6e6e6"></div>
<div style="left:2048.7px;top:144.65px;width:1px;height:36.45px;background:#e6e6e6"></div>
<div style="left:2816.5px;top:144.65px;width:1px;height:36.45px;background:#e6e6e6"></div>
<div style="left:1802.4px;top:155.97px;width:13.5px;height:13.5px;border:1px solid #8e8f8f;background:linear-gradient(135deg,#d8d8d8,#f6f6f6 70%);box-shadow:inset 0 0 0 1px #f4f4f4, inset 0 0 0 2px #c4c4c4"></div>
<svg style="left:1802.4px;top:155.97px;" width="13.5" height="13.5" viewBox="0 0 13.5 13.5"><path d="M3.2 6.8L5.6 10L10.3 2.8" fill="none" stroke="#3a4aa8" stroke-width="2" stroke-linecap="round" stroke-linejoin="round"/></svg>
<span class="s" style="left:1850.2px;top:154.17px;">TDC sigma_p_h Scan</span>
<span class="s" style="left:2053.7px;top:145.17px;letter-spacing:-0.035px">{python} applets/plot_xy_white.py --embed {ipc_address} data.sigma_p_h.counts --x data.sigma_p_h.x --error ERROR_DATASET --</span>
<span class="s" style="left:2053.7px;top:161.97px;letter-spacing:-0.035px">fit data.sigma_p_h.counts_fit --x_label 'sigma_p_h_position' --y_label 'counts'</span>
<div style="left:1799.2px;top:216.95px;width:1018.3px;height:1px;background:#dfdfdf"></div>
<div style="left:1845.6px;top:181.1px;width:1px;height:36.45px;background:#e6e6e6"></div>
<div style="left:2048.7px;top:181.1px;width:1px;height:36.45px;background:#e6e6e6"></div>
<div style="left:2816.5px;top:181.1px;width:1px;height:36.45px;background:#e6e6e6"></div>
<div style="left:1802.4px;top:192.42px;width:13.5px;height:13.5px;border:1px solid #8e8f8f;background:linear-gradient(135deg,#d8d8d8,#f6f6f6 70%);box-shadow:inset 0 0 0 1px #f4f4f4, inset 0 0 0 2px #c4c4c4"></div>
<span class="s" style="left:1850.2px;top:190.62px;">Shim Scan</span>
<span class="s" style="left:2053.7px;top:181.62px;letter-spacing:-0.035px">{python} applets/plot_xy_white.py --embed {ipc_address} data.y_shim.counts --x data.y_shim.x --error ERROR_DATASET --fit</span>
<span class="s" style="left:2053.7px;top:198.42px;letter-spacing:-0.035px">data.y_shim.counts_fit --x_label 'y_shim' --y_label 'counts'</span>
<div style="left:1799.2px;top:253.4px;width:1018.3px;height:1px;background:#dfdfdf"></div>
<div style="left:1845.6px;top:217.55px;width:1px;height:36.45px;background:#e6e6e6"></div>
<div style="left:2048.7px;top:217.55px;width:1px;height:36.45px;background:#e6e6e6"></div>
<div style="left:2816.5px;top:217.55px;width:1px;height:36.45px;background:#e6e6e6"></div>
<div style="left:1802.4px;top:228.87px;width:13.5px;height:13.5px;border:1px solid #8e8f8f;background:linear-gradient(135deg,#d8d8d8,#f6f6f6 70%);box-shadow:inset 0 0 0 1px #f4f4f4, inset 0 0 0 2px #c4c4c4"></div>
<span class="s" style="left:1850.2px;top:227.07px;">MW 3p3 2p2 Time Scan</span>
<span class="s" style="left:2053.7px;top:218.07px;letter-spacing:-0.035px">{python} applets/plot_xy_white.py  --embed {ipc_address} data.mw_3p3_2p2.t.counts --x data.mw_3p3_2p2.t.x --error</span>
<span class="s" style="left:2053.7px;top:234.87px;letter-spacing:-0.035px">ERROR_DATASET --fit data.mw_3p3_2p2.t.fit --x_label 'mw_dds.t' --y_label 'counts'</span>
<div style="left:1799.2px;top:289.85px;width:1018.3px;height:1px;background:#dfdfdf"></div>
<div style="left:1845.6px;top:254px;width:1px;height:36.45px;background:#e6e6e6"></div>
<div style="left:2048.7px;top:254px;width:1px;height:36.45px;background:#e6e6e6"></div>
<div style="left:2816.5px;top:254px;width:1px;height:36.45px;background:#e6e6e6"></div>
<div style="left:1802.4px;top:265.32px;width:13.5px;height:13.5px;border:1px solid #8e8f8f;background:linear-gradient(135deg,#d8d8d8,#f6f6f6 70%);box-shadow:inset 0 0 0 1px #f4f4f4, inset 0 0 0 2px #c4c4c4"></div>
<span class="s" style="left:1850.2px;top:263.52px;">MW 3p3 2p2 Ramsey Scan</span>
<span class="s" style="left:2053.7px;top:254.52px;letter-spacing:-0.035px">{python} applets/plot_xy_white.py --embed {ipc_address} data.mw_3p3_2p2.t_wait.counts --x data.mw_3p3_2p2.t_wait.x --error</span>
<span class="s" style="left:2053.7px;top:271.32px;letter-spacing:-0.035px">ERROR_DATASET --fit data.mw_3p3_2p2.t_wait.fit --x_label 'mw_dds.t_wait' --y_label 'counts'</span>
<div style="left:1799.2px;top:326.3px;width:1018.3px;height:1px;background:#dfdfdf"></div>
<div style="left:1845.6px;top:290.45px;width:1px;height:36.45px;background:#e6e6e6"></div>
<div style="left:2048.7px;top:290.45px;width:1px;height:36.45px;background:#e6e6e6"></div>
<div style="left:2816.5px;top:290.45px;width:1px;height:36.45px;background:#e6e6e6"></div>
<div style="left:1802.4px;top:301.77px;width:13.5px;height:13.5px;border:1px solid #8e8f8f;background:linear-gradient(135deg,#d8d8d8,#f6f6f6 70%);box-shadow:inset 0 0 0 1px #f4f4f4, inset 0 0 0 2px #c4c4c4"></div>
<span class="s" style="left:1850.2px;top:299.97px;">MW 3p3 2p2 Frequency Scan</span>
<span class="s" style="left:2053.7px;top:290.97px;letter-spacing:-0.035px">{python} applets/plot_xy_white.py --embed {ipc_address} data.mw_3p3_2p2.f.counts --x data.mw_3p3_2p2.f.x --error</span>
<span class="s" style="left:2053.7px;top:307.77px;letter-spacing:-0.035px">ERROR_DATASET --fit data.mw_3p3_2p2.f.fit --x_label 'mw_dds.f' --y_label 'counts'</span>
<div style="left:1845.6px;top:326.9px;width:1px;height:27.3px;background:#e6e6e6"></div>
<div style="left:2048.7px;top:326.9px;width:1px;height:27.3px;background:#e6e6e6"></div>
<div style="left:2816.5px;top:326.9px;width:1px;height:27.3px;background:#e6e6e6"></div>
<div style="left:1802.4px;top:338.22px;width:13.5px;height:13.5px;border:1px solid #8e8f8f;background:linear-gradient(135deg,#d8d8d8,#f6f6f6 70%);box-shadow:inset 0 0 0 1px #f4f4f4, inset 0 0 0 2px #c4c4c4"></div>
<div style="left:1847px;top:326.9px;width:968px;height:27.3px;overflow:hidden"><span class="s" style="left:3.2px;top:10.53px">MW 3p2 2p2 Frequency Scan</span><span class="s" style="left:206.7px;top:1.23px">{python} applets/plot_xy_white.py --embed {ipc_address} data.mw_3p2_2p2.f.counts --x data.mw_3p2_2p2.f.x --error</span><span class="s" style="left:206.7px;top:18.03px">ERROR_DATASET --fit data.mw_3p2_2p2.f.fit --x_label 'mw_dds.f' --y_label 'counts'</span></div>
<div style="left:2818.3px;top:57.8px;width:18.8px;height:296.2px;background:#f0f0f0"></div>
<svg style="left:2818.3px;top:57.8px;" width="18.8" height="17" viewBox="0 0 18.8 17"><path d="M5.6000000000000005 10.5L9.1 7L12.600000000000001 10.5Z" fill="#444"/></svg>
<svg style="left:2818.3px;top:337px;" width="18.8" height="17" viewBox="0 0 18.8 17"><path d="M5.6000000000000005 7L9.1 10.5L12.600000000000001 7Z" fill="#444"/></svg>
<div style="left:2818.3px;top:78.3px;width:16.4px;height:46px;border:1px solid #979797;border-radius:2px;background:linear-gradient(90deg,#f3f3f3,#e6e6e6 45%,#d2d2d2 55%,#dadada);box-shadow:inset 0 0 0 1px #fff"></div>
<div style="left:2822.1px;top:97.8px;width:8.8px;height:1.2px;background:#777"></div>
<div style="left:2822.1px;top:100.8px;width:8.8px;height:1.2px;background:#777"></div>
<div style="left:2822.1px;top:103.8px;width:8.8px;height:1.2px;background:#777"></div>
<div style="left:1800px;top:355.6px;width:73.4px;height:19.8px;border:1px solid #b4b4b4;border-top:0;background:linear-gradient(#f2f2f2,#e6e6e6)"></div>
<span class="t c" style="left:1536.5px;width:600px;top:356.7px;">Shortcuts</span>
<div style="left:1873.2px;top:354.6px;width:67.5px;height:23px;border:1px solid #898c95;border-top:0;background:#fff"></div>
<span class="t c" style="left:1606.8px;width:600px;top:357.4px;">Applets</span>
<div style="left:1797.4px;top:384.2px;width:1039.6px;height:19.5px;background:#dcdcdc;border:1px solid #c3c3c3"></div>
<span class="t" style="left:1801.9px;top:385.95px;">TTL</span>
<svg style="left:2822.2px;top:389px;" width="10" height="10.5" viewBox="0 0 10 10.5"><rect x="3.4" y="0.7" width="5.8" height="5.6" fill="#555" stroke="#000" stroke-width="1.4"/><rect x="3.4" y="0.4" width="5.8" height="1.6" fill="#000"/><rect x="0.8" y="3.9" width="5.8" height="5.6" fill="#fff" stroke="#000" stroke-width="1.5"/><rect x="0.8" y="3.4" width="5.8" height="2" fill="#000"/></svg>
<div style="left:1797.4px;top:407.2px;width:1039px;height:449.6px;border:1px solid #b9b9b9;background:#f0f0f0"></div>
<div style="left:1798.4px;top:411.6px;width:160.9px;height:144.1px;border:1px solid #d2d2d6;background:#efeff1;box-shadow:inset 0 0 0 1px #fbfbfb, inset 0 0 0 2px #d0d0d5"></div>
<span class="t c" style="left:1577.35px;width:600px;top:425.8px;letter-spacing:-0.36px">ttl12:</span>
<span class="t c" style="left:1578.35px;width:600px;top:447.5px;font-size:9.7px;letter-spacing:-0.6px">OUT</span>
<span class="t c" style="left:1578.35px;width:600px;top:499.2px;font-size:29px;letter-spacing:0;line-height:36px">0</span>
<div style="left:1964.1px;top:411.6px;width:160.9px;height:144.1px;border:1px solid #d2d2d6;background:#efeff1;box-shadow:inset 0 0 0 1px #fbfbfb, inset 0 0 0 2px #d0d0d5"></div>
<span class="t c" style="left:1743.05px;width:600px;top:425.8px;letter-spacing:-0.36px">ttl13:</span>
<span class="t c" style="left:1744.05px;width:600px;top:447.5px;font-size:9.7px;letter-spacing:-0.6px">OUT</span>
<span class="t c" style="left:1744.05px;width:600px;top:499.2px;font-size:29px;letter-spacing:0;line-height:36px">0</span>
<div style="left:2129.8px;top:411.6px;width:160.9px;height:144.1px;border:1px solid #d2d2d6;background:#efeff1;box-shadow:inset 0 0 0 1px #fbfbfb, inset 0 0 0 2px #d0d0d5"></div>
<span class="t c" style="left:1908.75px;width:600px;top:425.8px;letter-spacing:-0.36px">ttl14:</span>
<span class="t c" style="left:1909.75px;width:600px;top:447.5px;font-size:9.7px;letter-spacing:-0.6px">OUT</span>
<span class="t c" style="left:1909.75px;width:600px;top:499.2px;font-size:29px;letter-spacing:0;line-height:36px">0</span>
<div style="left:2295.5px;top:411.6px;width:160.9px;height:144.1px;border:1px solid #d2d2d6;background:#efeff1;box-shadow:inset 0 0 0 1px #fbfbfb, inset 0 0 0 2px #d0d0d5"></div>
<span class="t c" style="left:2074.45px;width:600px;top:425.8px;letter-spacing:-0.36px">ttl15:</span>
<span class="t c" style="left:2075.45px;width:600px;top:447.5px;font-size:9.7px;letter-spacing:-0.6px">OUT</span>
<span class="t c" style="left:2075.45px;width:600px;top:499.2px;font-size:29px;letter-spacing:0;line-height:36px">0</span>
<div style="left:2461.2px;top:411.6px;width:160.9px;height:144.1px;border:1px solid #d2d2d6;background:#efeff1;box-shadow:inset 0 0 0 1px #fbfbfb, inset 0 0 0 2px #d0d0d5"></div>
<span class="t c" style="left:2240.15px;width:600px;top:425.8px;letter-spacing:-0.36px">ttl16:</span>
<span class="t c" style="left:2241.15px;width:600px;top:447.5px;font-size:9.7px;letter-spacing:-0.6px">OUT</span>
<span class="t c" style="left:2241.15px;width:600px;top:499.2px;font-size:29px;letter-spacing:0;line-height:36px">0</span>
<div style="left:2626.9px;top:411.6px;width:160.9px;height:144.1px;border:1px solid #d2d2d6;background:#efeff1;box-shadow:inset 0 0 0 1px #fbfbfb, inset 0 0 0 2px #d0d0d5"></div>
<span class="t c" style="left:2405.85px;width:600px;top:425.8px;letter-spacing:-0.36px">ttl17:</span>
<span class="t c" style="left:2406.85px;width:600px;top:447.5px;font-size:9.7px;letter-spacing:-0.6px">OUT</span>
<span class="t c" style="left:2406.85px;width:600px;top:499.2px;font-size:29px;letter-spacing:0;line-height:36px">0</span>
<div style="left:1798.4px;top:560.7px;width:160.9px;height:143.7px;border:1px solid #d2d2d6;background:#efeff1;box-shadow:inset 0 0 0 1px #fbfbfb, inset 0 0 0 2px #d0d0d5"></div>
<span class="t c" style="left:1577.35px;width:600px;top:574.9px;letter-spacing:-0.36px">ttl18</span>
<span class="t c" style="left:1578.35px;width:600px;top:596.6px;font-size:9.7px;letter-spacing:-0.6px">OUT</span>
<span class="t c" style="left:1578.35px;width:600px;top:648.3px;font-size:29px;letter-spacing:0;line-height:36px">0</span>
<div style="left:1964.1px;top:560.7px;width:160.9px;height:143.7px;border:1px solid #d2d2d6;background:#efeff1;box-shadow:inset 0 0 0 1px #fbfbfb, inset 0 0 0 2px #d0d0d5"></div>
<span class="t c" style="left:1743.05px;width:600px;top:574.9px;letter-spacing:-0.36px">ttl19</span>
<span class="t c" style="left:1744.05px;width:600px;top:596.6px;font-size:9.7px;letter-spacing:-0.6px">OUT</span>
<span class="t c" style="left:1744.05px;width:600px;top:648.3px;font-size:29px;letter-spacing:0;line-height:36px">0</span>
<div style="left:2129.8px;top:560.7px;width:160.9px;height:143.7px;border:1px solid #d2d2d6;background:#efeff1;box-shadow:inset 0 0 0 1px #fbfbfb, inset 0 0 0 2px #d0d0d5"></div>
<span class="t c" style="left:1908.75px;width:600px;top:574.9px;letter-spacing:-0.36px">ttl20: pmt</span>
<span class="t c" style="left:1909.75px;width:600px;top:596.6px;font-size:9.7px;letter-spacing:-0.6px">IN</span>
<span class="t c" style="left:1909.75px;width:600px;top:648.3px;font-size:29px;letter-spacing:0;line-height:36px">0</span>
<div style="left:2295.5px;top:560.7px;width:160.9px;height:143.7px;border:1px solid #d2d2d6;background:#efeff1;box-shadow:inset 0 0 0 1px #fbfbfb, inset 0 0 0 2px #d0d0d5"></div>
<span class="t c" style="left:2074.45px;width:600px;top:575.7px;letter-spacing:-0.36px">ttl21: flipper</span>
<span class="t c" style="left:2075.45px;width:600px;top:597.4px;font-size:9.7px;letter-spacing:-0.6px">OUT</span>
<span class="t c" style="left:2075.95px;width:600px;top:616.3px;font-size:9.2px;letter-spacing:-0.6px;color:#d00000">OVERRIDE</span>
<span class="t c" style="left:2075.95px;width:600px;top:648.3px;font-size:29px;font-weight:bold;color:#d00000;letter-spacing:0;line-height:36px">1</span>
<div style="left:2461.2px;top:560.7px;width:160.9px;height:143.7px;border:1px solid #d2d2d6;background:#efeff1;box-shadow:inset 0 0 0 1px #fbfbfb, inset 0 0 0 2px #d0d0d5"></div>
<span class="t c" style="left:2240.15px;width:600px;top:574.9px;letter-spacing:-0.36px">ttl22: oven</span>
<span class="t c" style="left:2241.15px;width:600px;top:596.6px;font-size:9.7px;letter-spacing:-0.6px">OUT</span>
<span class="t c" style="left:2241.15px;width:600px;top:648.3px;font-size:29px;letter-spacing:0;line-height:36px">0</span>
<div style="left:2626.9px;top:560.7px;width:160.9px;height:143.7px;border:1px solid #d2d2d6;background:#efeff1;box-shadow:inset 0 0 0 1px #fbfbfb, inset 0 0 0 2px #d0d0d5"></div>
<span class="t c" style="left:2405.85px;width:600px;top:574.9px;letter-spacing:-0.36px">ttl23: pi</span>
<span class="t c" style="left:2406.85px;width:600px;top:596.6px;font-size:9.7px;letter-spacing:-0.6px">OUT</span>
<span class="t c" style="left:2406.85px;width:600px;top:648.3px;font-size:29px;letter-spacing:0;line-height:36px">0</span>
<div style="left:1798.4px;top:709.7px;width:160.9px;height:144.2px;border:1px solid #d2d2d6;background:#efeff1;box-shadow:inset 0 0 0 1px #fbfbfb, inset 0 0 0 2px #d0d0d5"></div>
<span class="t c" style="left:1577.35px;width:600px;top:723.9px;letter-spacing:-0.36px">ttl24: mw_mux</span>
<span class="t c" style="left:1578.35px;width:600px;top:745.6px;font-size:9.7px;letter-spacing:-0.6px">OUT</span>
<span class="t c" style="left:1578.35px;width:600px;top:797.3px;font-size:29px;letter-spacing:0;line-height:36px">0</span>
<div style="left:1964.1px;top:709.7px;width:160.9px;height:144.2px;border:1px solid #d2d2d6;background:#efeff1;box-shadow:inset 0 0 0 1px #fbfbfb, inset 0 0 0 2px #d0d0d5"></div>
<span class="t c" style="left:1743.05px;width:600px;top:723.9px;letter-spacing:-0.36px">ttl25: mw_ab</span>
<span class="t c" style="left:1744.05px;width:600px;top:745.6px;font-size:9.7px;letter-spacing:-0.6px">OUT</span>
<span class="t c" style="left:1744.05px;width:600px;top:797.3px;font-size:29px;letter-spacing:0;line-height:36px">0</span>
<div style="left:2129.8px;top:709.7px;width:160.9px;height:144.2px;border:1px solid #d2d2d6;background:#efeff1;box-shadow:inset 0 0 0 1px #fbfbfb, inset 0 0 0 2px #d0d0d5"></div>
<span class="t c" style="left:1908.75px;width:600px;top:723.9px;letter-spacing:-0.36px">ttl26</span>
<span class="t c" style="left:1909.75px;width:600px;top:745.6px;font-size:9.7px;letter-spacing:-0.6px">OUT</span>
<span class="t c" style="left:1909.75px;width:600px;top:797.3px;font-size:29px;letter-spacing:0;line-height:36px">0</span>
<div style="left:2295.5px;top:709.7px;width:160.9px;height:144.2px;border:1px solid #d2d2d6;background:#efeff1;box-shadow:inset 0 0 0 1px #fbfbfb, inset 0 0 0 2px #d0d0d5"></div>
<span class="t c" style="left:2074.45px;width:600px;top:723.9px;letter-spacing:-0.36px">ttl27: iq_reset</span>
<span class="t c" style="left:2075.45px;width:600px;top:745.6px;font-size:9.7px;letter-spacing:-0.6px">OUT</span>
<span class="t c" style="left:2075.45px;width:600px;top:797.3px;font-size:29px;letter-spacing:0;line-height:36px">0</span>
<div style="left:2461.2px;top:709.7px;width:160.9px;height:144.2px;border:1px solid #d2d2d6;background:#efeff1;box-shadow:inset 0 0 0 1px #fbfbfb, inset 0 0 0 2px #d0d0d5"></div>
<span class="t c" style="left:2240.15px;width:600px;top:723.9px;letter-spacing:-0.36px">ttl28: ps0</span>
<span class="t c" style="left:2241.15px;width:600px;top:745.6px;font-size:9.7px;letter-spacing:-0.6px">OUT</span>
<span class="t c" style="left:2241.15px;width:600px;top:797.3px;font-size:29px;letter-spacing:0;line-height:36px">1</span>
<div style="left:2626.9px;top:709.7px;width:160.9px;height:144.2px;border:1px solid #d2d2d6;background:#efeff1;box-shadow:inset 0 0 0 1px #fbfbfb, inset 0 0 0 2px #d0d0d5"></div>
<span class="t c" style="left:2405.85px;width:600px;top:723.9px;letter-spacing:-0.36px">ttl29: ps1</span>
<span class="t c" style="left:2406.85px;width:600px;top:745.6px;font-size:9.7px;letter-spacing:-0.6px">OUT</span>
<span class="t c" style="left:2406.85px;width:600px;top:797.3px;font-size:29px;letter-spacing:0;line-height:36px">0</span>
<div style="left:2818.3px;top:408.2px;width:18.8px;height:447.6px;background:#f0f0f0"></div>
<svg style="left:2818.3px;top:408.2px;" width="18.8" height="17" viewBox="0 0 18.8 17"><path d="M5.6000000000000005 10.5L9.1 7L12.600000000000001 10.5Z" fill="#444"/></svg>
<svg style="left:2818.3px;top:838.8px;" width="18.8" height="17" viewBox="0 0 18.8 17"><path d="M5.6000000000000005 7L9.1 10.5L12.600000000000001 7Z" fill="#444"/></svg>
<div style="left:2818.3px;top:546px;width:16.4px;height:173px;border:1px solid #979797;border-radius:2px;background:linear-gradient(90deg,#f3f3f3,#e6e6e6 45%,#d2d2d2 55%,#dadada);box-shadow:inset 0 0 0 1px #fff"></div>
<div style="left:2822.1px;top:629px;width:8.8px;height:1.2px;background:#777"></div>
<div style="left:2822.1px;top:632px;width:8.8px;height:1.2px;background:#777"></div>
<div style="left:2822.1px;top:635px;width:8.8px;height:1.2px;background:#777"></div>
<div style="left:1797.4px;top:862.5px;width:1039.6px;height:19.9px;background:#dcdcdc;border:1px solid #c3c3c3"></div>
<span class="t" style="left:1801.9px;top:864.45px;">DDS</span>
<svg style="left:2822.2px;top:867.3px;" width="10" height="10.5" viewBox="0 0 10 10.5"><rect x="3.4" y="0.7" width="5.8" height="5.6" fill="#555" stroke="#000" stroke-width="1.4"/><rect x="3.4" y="0.4" width="5.8" height="1.6" fill="#000"/><rect x="0.8" y="3.9" width="5.8" height="5.6" fill="#fff" stroke="#000" stroke-width="1.5"/><rect x="0.8" y="3.4" width="5.8" height="2" fill="#000"/></svg>
<div style="left:1797.4px;top:885.6px;width:1039px;height:295.6px;border:1px solid #b9b9b9;background:#f0f0f0"></div>
<div style="left:1798.4px;top:887.4px;width:164.6px;height:142.2px;border:1px solid #d2d2d6;background:#efeff1;box-shadow:inset 0 0 0 1px #fbfbfb, inset 0 0 0 2px #d0d0d5"></div>
<span class="t c" style="left:1580.2px;width:600px;top:909.9px;">dds0: unassigned</span>
<span class="t c" style="left:1580.7px;width:600px;top:952.4px;font-size:24px;letter-spacing:-0.05px;line-height:30px">100.0000002</span>
<span class="t c" style="left:1580.7px;width:600px;top:982.3px;font-size:24px;letter-spacing:-0.3px;line-height:30px">MHz</span>
<div style="left:1968.8px;top:887.4px;width:164.2px;height:142.2px;border:1px solid #d2d2d6;background:#efeff1;box-shadow:inset 0 0 0 1px #fbfbfb, inset 0 0 0 2px #d0d0d5"></div>
<span class="t c" style="left:1750.4px;width:600px;top:909.9px;">dds1: bd1</span>
<span class="t c" style="left:1750.9px;width:600px;top:952.4px;font-size:24px;letter-spacing:-0.05px;line-height:30px">329.9999999</span>
<span class="t c" style="left:1750.9px;width:600px;top:982.3px;font-size:24px;letter-spacing:-0.3px;line-height:30px">MHz</span>
<div style="left:2138.7px;top:887.4px;width:164.2px;height:142.2px;border:1px solid #d2d2d6;background:#efeff1;box-shadow:inset 0 0 0 1px #fbfbfb, inset 0 0 0 2px #d0d0d5"></div>
<span class="t c" style="left:1920.3px;width:600px;top:909.9px;">dds2: bd2</span>
<span class="t c" style="left:1920.8px;width:600px;top:952.4px;font-size:24px;letter-spacing:-0.05px;line-height:30px">232.0000000</span>
<span class="t c" style="left:1920.8px;width:600px;top:982.3px;font-size:24px;letter-spacing:-0.3px;line-height:30px">MHz</span>
<div style="left:2308.7px;top:887.4px;width:164.2px;height:142.2px;border:1px solid #d2d2d6;background:#efeff1;box-shadow:inset 0 0 0 1px #fbfbfb, inset 0 0 0 2px #d0d0d5"></div>
<span class="t c" style="left:2090.3px;width:600px;top:909.9px;">dds3: bdd</span>
<span class="t c" style="left:2090.8px;width:600px;top:952.4px;font-size:24px;letter-spacing:-0.05px;line-height:30px">260.9999998</span>
<span class="t c" style="left:2090.8px;width:600px;top:982.3px;font-size:24px;letter-spacing:-0.3px;line-height:30px">MHz</span>
<div style="left:2478.7px;top:887.4px;width:160.1px;height:142.2px;border:1px solid #d2d2d6;background:#efeff1;box-shadow:inset 0 0 0 1px #fbfbfb, inset 0 0 0 2px #d0d0d5"></div>
<span class="t c" style="left:2258.25px;width:600px;top:909.9px;">dds4: tickle</span>
<span class="t c" style="left:2258.75px;width:600px;top:952.4px;font-size:24px;letter-spacing:-0.05px;line-height:30px">8.9999998</span>
<span class="t c" style="left:2258.75px;width:600px;top:982.3px;font-size:24px;letter-spacing:-0.3px;line-height:30px">MHz</span>
<div style="left:2644.5px;top:887.4px;width:164.6px;height:142.2px;border:1px solid #d2d2d6;background:#efeff1;box-shadow:inset 0 0 0 1px #fbfbfb, inset 0 0 0 2px #d0d0d5"></div>
<span class="t c" style="left:2426.3px;width:600px;top:909.9px;">dds5: rd</span>
<span class="t c" style="left:2426.8px;width:600px;top:952.4px;font-size:24px;letter-spacing:-0.05px;line-height:30px">205.0000001</span>
<span class="t c" style="left:2426.8px;width:600px;top:982.3px;font-size:24px;letter-spacing:-0.3px;line-height:30px">MHz</span>
<div style="left:1798.4px;top:1036.6px;width:164.6px;height:142.5px;border:1px solid #d2d2d6;background:#efeff1;box-shadow:inset 0 0 0 1px #fbfbfb, inset 0 0 0 2px #d0d0d5"></div>
<span class="t c" style="left:1580.2px;width:600px;top:1059.1px;">dds6: ram1</span>
<span class="t c" style="left:1580.7px;width:600px;top:1101.6px;font-size:24px;letter-spacing:-0.05px;line-height:30px">333.2118960</span>
<span class="t c" style="left:1580.7px;width:600px;top:1131.5px;font-size:24px;letter-spacing:-0.3px;line-height:30px">MHz</span>
<div style="left:1968.8px;top:1036.6px;width:164.2px;height:142.5px;border:1px solid #d2d2d6;background:#efeff1;box-shadow:inset 0 0 0 1px #fbfbfb, inset 0 0 0 2px #d0d0d5"></div>
<span class="t c" style="left:1750.4px;width:600px;top:1059.1px;">dds7: ram2</span>
<span class="t c" style="left:1750.9px;width:600px;top:1101.6px;font-size:24px;letter-spacing:-0.05px;line-height:30px">333.2118960</span>
<span class="t c" style="left:1750.9px;width:600px;top:1131.5px;font-size:24px;letter-spacing:-0.3px;line-height:30px">MHz</span>
<div style="left:2138.7px;top:1036.6px;width:164.2px;height:142.5px;border:1px solid #d2d2d6;background:#efeff1;box-shadow:inset 0 0 0 1px #fbfbfb, inset 0 0 0 2px #d0d0d5"></div>
<span class="t c" style="left:1920.3px;width:600px;top:1059.1px;">dds8: unassigned</span>
<span class="t c" style="left:1920.8px;width:600px;top:1101.6px;font-size:24px;letter-spacing:-0.05px;line-height:30px">100.0000002</span>
<span class="t c" style="left:1920.8px;width:600px;top:1131.5px;font-size:24px;letter-spacing:-0.3px;line-height:30px">MHz</span>
<div style="left:2308.7px;top:1036.6px;width:164.2px;height:142.5px;border:1px solid #d2d2d6;background:#efeff1;box-shadow:inset 0 0 0 1px #fbfbfb, inset 0 0 0 2px #d0d0d5"></div>
<span class="t c" style="left:2090.3px;width:600px;top:1059.1px;">dds9: unassigned</span>
<span class="t c" style="left:2090.8px;width:600px;top:1101.6px;font-size:24px;letter-spacing:-0.05px;line-height:30px">100.0000002</span>
<span class="t c" style="left:2090.8px;width:600px;top:1131.5px;font-size:24px;letter-spacing:-0.3px;line-height:30px">MHz</span>
<div style="left:2478.7px;top:1036.6px;width:165px;height:142.5px;border:1px solid #d2d2d6;background:#efeff1;box-shadow:inset 0 0 0 1px #fbfbfb, inset 0 0 0 2px #d0d0d5"></div>
<span class="t c" style="left:2260.7px;width:600px;top:1059.1px;">dds10: unassigned</span>
<span class="t c" style="left:2261.2px;width:600px;top:1101.6px;font-size:24px;letter-spacing:-0.05px;line-height:30px">100.0000002</span>
<span class="t c" style="left:2261.2px;width:600px;top:1131.5px;font-size:24px;letter-spacing:-0.3px;line-height:30px">MHz</span>
<div style="left:2648.6px;top:1036.6px;width:165px;height:142.5px;border:1px solid #d2d2d6;background:#efeff1;box-shadow:inset 0 0 0 1px #fbfbfb, inset 0 0 0 2px #d0d0d5"></div>
<span class="t c" style="left:2430.6px;width:600px;top:1059.1px;">dds11: unassigned</span>
<span class="t c" style="left:2431.1px;width:600px;top:1101.6px;font-size:24px;letter-spacing:-0.05px;line-height:30px">100.0000002</span>
<span class="t c" style="left:2431.1px;width:600px;top:1131.5px;font-size:24px;letter-spacing:-0.3px;line-height:30px">MHz</span>
<div style="left:559px;top:33px;width:1234.3px;height:1148.6px;background:#a0a0a0"></div>
<div style="left:559px;top:33px;width:1234.3px;height:8px;background:linear-gradient(#b0b0b0,#a4a4a4 60%,#a0a0a0)"></div>
<div style="left:562px;top:38px;width:853px;height:2.6px;background:linear-gradient(rgba(120,120,120,0),rgba(100,100,100,.4))"></div>
<div style="left:562.4px;top:40.4px;width:854.6px;height:647.6px;border:1px solid #4d4d4d;border-radius:7px 7px 1px 1px;background:#d7e3f2;box-shadow:inset 0 0 0 1px rgba(255,255,255,.75)"></div>
<div style="left:564.4px;top:42.4px;width:850.6px;height:27px;border-radius:5px 5px 0 0;background:linear-gradient(#c4d2e6 0,#d3dff0 30%,#dfe8f5 100%)"></div>
<div style="left:571px;top:68.6px;width:837.4px;height:611.2px;background:#f0f0f0;border:1px solid #dfe6ef"></div>
<svg style="left:571.5px;top:50px;" width="18" height="18" viewBox="0 0 18 18"><path d="M4.5 1.2h8l3.3 3.3v12.3h-11.3z" fill="#fdfdfd" stroke="#1a1a1a" stroke-width="1.3" stroke-linejoin="round"/><path d="M12.5 1.2v3.3h3.3" fill="#ddd" stroke="#1a1a1a" stroke-width="1"/><path d="M8.5 6.2h5M9.5 8.3h4.5M9.5 10.4h4.5M6.5 12.5h7.5M6.5 14.5h7.5" stroke="#444" stroke-width="1"/><path d="M2.8 11.2L0.8 14" stroke="#3a2a30" stroke-width="1.8" stroke-linecap="round"/><circle cx="5.6" cy="7.4" r="3.9" fill="#9cc4f2" stroke="#27436b" stroke-width="1.2"/><circle cx="5" cy="6.6" r="1.6" fill="#d6e8fb" opacity=".8"/></svg>
<span class="s" style="left:593.2px;top:52px;color:#6d6d80;font-size:13.5px">repo:raman/Ra</span>
<div style="left:577.2px;top:74.7px;width:122.8px;height:510.9px;background:#fff;border:1px solid #868a90"></div>
<div style="left:600.3px;top:75.8px;width:99.7px;height:18.4px;background:#676767"></div>
<span class="sb" style="left:603.5px;top:75.9px;color:#dcdcf4;font-size:13.5px;letter-spacing:-0.25px">Scan</span>
<svg style="left:585.8px;top:80.5px;" width="8" height="8" viewBox="0 0 8 8"><path d="M6.8 0.8V6.8H0.8Z" fill="#555" stroke="#222" stroke-width="1" stroke-linejoin="round"/></svg>
<span class="s" style="left:625.2px;top:157.8px;">radial_1_f</span>
<span class="s" style="left:625.2px;top:251.3px;">t_pulse</span>
<span class="s" style="left:625.2px;top:295.8px;">repetitions</span>
<span class="s" style="left:625.2px;top:339.7px;">nbins</span>
<span class="s" style="left:625.2px;top:383.5px;">save_fit</span>
<span class="s" style="left:625.2px;top:427.9px;">electrode</span>
<div style="left:600.3px;top:458.6px;width:99.7px;height:18.4px;background:#676767"></div>
<span class="sb" style="left:603.5px;top:458.7px;color:#dcdcf4;font-size:13.5px;letter-spacing:-0.25px">Detection</span>
<svg style="left:585.8px;top:463.3px;" width="8" height="8" viewBox="0 0 8 8"><path d="M6.8 0.8V6.8H0.8Z" fill="#555" stroke="#222" stroke-width="1" stroke-linejoin="round"/></svg>
<span class="s" style="left:625.2px;top:490.7px;">dds_bd1_</span>
<span class="s" style="left:625.2px;top:535.1px;">t_detect</span>
<div style="left:577.3px;top:596px;width:13.5px;height:13.5px;border:1px solid #8e8f8f;background:linear-gradient(135deg,#d8d8d8,#f6f6f6 70%);box-shadow:inset 0 0 0 1px #f4f4f4, inset 0 0 0 2px #c4c4c4"></div>
<span class="t" style="left:596px;top:593.3px;">Due date:</span>
<div style="left:661px;top:593px;width:39px;height:21px;background:#fff;border:1px solid #e0e0e0;border-top-color:#c8c8c8"></div>
<span class="t" style="left:665px;top:593.9px;">Au</span>
<span class="t" style="left:576.2px;top:622.3px;">Priority:</span>
<div style="left:661px;top:621.5px;width:39px;height:21px;background:#fff;border:1px solid #e0e0e0;border-top-color:#c8c8c8"></div>
<span class="t" style="left:665px;top:622.9px;">0</span>
<span class="t" style="left:576.2px;top:652px;letter-spacing:-0.6px">Logging level:</span>
<div style="left:661px;top:651px;width:44px;height:21px;border:1px solid #707070;border-radius:3px;background:linear-gradient(#f2f2f2,#ebebeb 48%,#dddddd 52%,#cfcfcf);box-shadow:inset 0 0 0 1px #fcfcfc;"></div>
<span class="t" style="left:665px;top:652.5px;font-size:12px;letter-spacing:-0.7px">WA</span>
<div style="left:678.2px;top:41.6px;width:932.6px;height:912.6px;border:1px solid #4d4d4d;border-radius:7px 7px 1px 1px;background:#b9d0ec;box-shadow:inset 0 0 0 1px rgba(255,255,255,.75)"></div>
<div style="left:680.2px;top:43.6px;width:928.6px;height:27px;border-radius:5px 5px 0 0;background:linear-gradient(#a3b9dc 0,#b5c9e8 30%,#c3d5ee 100%)"></div>
<div style="left:686.8px;top:69.8px;width:915.4px;height:876.2px;background:#f0f0f0;border:1px solid #dfe6ef"></div>
<svg style="left:687px;top:51px;" width="18" height="18" viewBox="0 0 18 18"><path d="M4.5 1.2h8l3.3 3.3v12.3h-11.3z" fill="#fdfdfd" stroke="#1a1a1a" stroke-width="1.3" stroke-linejoin="round"/><path d="M12.5 1.2v3.3h3.3" fill="#ddd" stroke="#1a1a1a" stroke-width="1"/><path d="M8.5 6.2h5M9.5 8.3h4.5M9.5 10.4h4.5M6.5 12.5h7.5M6.5 14.5h7.5" stroke="#444" stroke-width="1"/><path d="M2.8 11.2L0.8 14" stroke="#3a2a30" stroke-width="1.8" stroke-linecap="round"/><circle cx="5.6" cy="7.4" r="3.9" fill="#9cc4f2" stroke="#27436b" stroke-width="1.2"/><circle cx="5" cy="6.6" r="1.6" fill="#d6e8fb" opacity=".8"/></svg>
<span class="s" style="left:709.3px;top:52.6px;color:#15152e;font-size:13.2px">repo:cooling/Cooling Axial Frequency Scan</span>
<div style="left:1496.3px;top:48.3px;width:33.5px;height:18.5px;border:1px solid #7d8ba6;border-radius:3px;background:linear-gradient(#cbd8eb 0,#bfcee5 45%,#aabcd9 50%,#b9cae2 100%);box-shadow:inset 0 0 0 1px rgba(255,255,255,.55)"></div>
<div style="left:1532.2px;top:48.3px;width:33.5px;height:18.5px;border:1px solid #7d8ba6;border-radius:3px;background:linear-gradient(#cbd8eb 0,#bfcee5 45%,#aabcd9 50%,#b9cae2 100%);box-shadow:inset 0 0 0 1px rgba(255,255,255,.55)"></div>
<div style="left:1569.2px;top:48.3px;width:33.8px;height:18.5px;border:1px solid #6b3a32;border-radius:3px;background:linear-gradient(#dfa59a 0,#d28b79 45%,#bd4a31 50%,#c96a55 100%);box-shadow:inset 0 0 0 1px rgba(255,255,255,.55)"></div>
<svg style="left:1506.5px;top:56.5px;" width="14" height="7" viewBox="0 0 14 7"><rect x="1" y="1" width="11" height="3.6" fill="#fff" stroke="#4a5568" stroke-width="1"/></svg>
<svg style="left:1542.5px;top:51.5px;" width="14" height="12" viewBox="0 0 14 12"><rect x="1.2" y="1.2" width="11" height="9" fill="none" stroke="#4a5568" stroke-width="1"/><rect x="2.6" y="2.8" width="8.2" height="5.8" fill="none" stroke="#fff" stroke-width="1.8"/><rect x="4" y="4.2" width="5.4" height="3" fill="none" stroke="#4a5568" stroke-width="1"/></svg>
<svg style="left:1579.2px;top:51.6px;" width="14" height="12" viewBox="0 0 14 12"><path d="M2.4 2.2L11.6 9.8M11.6 2.2L2.4 9.8" stroke="#6a2c20" stroke-width="4.4" stroke-linecap="butt"/><path d="M2.9 2.6L11.1 9.4M11.1 2.6L2.9 9.4" stroke="#fff" stroke-width="2.6" stroke-linecap="butt"/></svg>
<div style="left:693.2px;top:76.2px;width:902.8px;height:776.6px;background:#fff;border:1px solid #868a90"></div>
<div style="left:716.1px;top:77px;width:833.9px;height:18.3px;background:#676767"></div>
<span class="sb" style="left:719.3px;top:77.05px;color:#dcdcf4;font-size:13.5px;letter-spacing:-0.25px">Scan</span>
<svg style="left:701.8px;top:81.65px;" width="8" height="8" viewBox="0 0 8 8"><path d="M6.8 0.8V6.8H0.8Z" fill="#555" stroke="#222" stroke-width="1" stroke-linejoin="round"/></svg>
<div style="left:873.7px;top:109.7px;width:13.4px;height:13.4px;border:1px solid #8e8f8f;border-radius:50%;background:radial-gradient(circle at 60% 60%,#fbfbfb 20%,#cfcfcf 95%)"></div>
<span class="s" style="left:895.5px;top:106.5px;">No scan</span>
<div style="left:1042px;top:109.7px;width:13.4px;height:13.4px;border:1px solid #8e8f8f;border-radius:50%;background:radial-gradient(circle at 60% 60%,#fbfbfb 20%,#cfcfcf 95%)"></div>
<div style="left:1045.1px;top:112.8px;width:7.2px;height:7.2px;border-radius:50%;background:radial-gradient(circle at 35% 30%,#9fd5f5,#2f6f9f 55%,#1a3f63);"></div>
<span class="s" style="left:1063.6px;top:106.5px;">Linear</span>
<div style="left:1210.6px;top:109.7px;width:13.4px;height:13.4px;border:1px solid #8e8f8f;border-radius:50%;background:radial-gradient(circle at 60% 60%,#fbfbfb 20%,#cfcfcf 95%)"></div>
<span class="s" style="left:1232px;top:106.5px;">Random</span>
<div style="left:1378.3px;top:109.7px;width:13.4px;height:13.4px;border:1px solid #8e8f8f;border-radius:50%;background:radial-gradient(circle at 60% 60%,#fbfbfb 20%,#cfcfcf 95%)"></div>
<span class="s" style="left:1400px;top:106.5px;">Explicit</span>
<span class="s" style="left:741.6px;top:158.3px;">red_axial_f</span>
<div style="left:884.3px;top:193.8px;width:517.5px;height:1.2px;background:#000"></div>
<div style="left:925.7px;top:189.1px;width:1.1px;height:5.3px;background:#000"></div>
<span class="s c" style="left:625.5px;width:600px;top:172.2px;letter-spacing:-0.3px">−2.7</span>
<div style="left:1029.4px;top:189.1px;width:1.1px;height:5.3px;background:#000"></div>
<span class="s c" style="left:729.2px;width:600px;top:172.2px;letter-spacing:-0.3px">−2.6</span>
<div style="left:1133.2px;top:189.1px;width:1.1px;height:5.3px;background:#000"></div>
<span class="s c" style="left:833px;width:600px;top:172.2px;letter-spacing:-0.3px">−2.5</span>
<div style="left:1236.9px;top:189.1px;width:1.1px;height:5.3px;background:#000"></div>
<span class="s c" style="left:936.7px;width:600px;top:172.2px;letter-spacing:-0.3px">−2.4</span>
<div style="left:1339.9px;top:189.1px;width:1.1px;height:5.3px;background:#000"></div>
<span class="s c" style="left:1039.7px;width:600px;top:172.2px;letter-spacing:-0.3px">−2.3</span>
<svg style="left:884px;top:194.4px;" width="520" height="9" viewBox="0 0 520 9"><rect x="51" y="0" width="1.2" height="8.4" fill="#000"/><rect x="55.19" y="0" width="1.2" height="8.4" fill="#000"/><rect x="59.38" y="0" width="1.2" height="8.4" fill="#000"/><rect x="63.57" y="0" width="1.2" height="8.4" fill="#000"/><rect x="67.76" y="0" width="1.2" height="8.4" fill="#000"/><rect x="71.94" y="0" width="1.2" height="8.4" fill="#000"/><rect x="76.13" y="0" width="1.2" height="8.4" fill="#000"/><rect x="80.32" y="0" width="1.2" height="8.4" fill="#000"/><rect x="84.51" y="0" width="1.2" height="8.4" fill="#000"/><rect x="88.7" y="0" width="1.2" height="8.4" fill="#000"/><rect x="92.89" y="0" width="1.2" height="8.4" fill="#000"/><rect x="97.08" y="0" width="1.2" height="8.4" fill="#000"/><rect x="101.27" y="0" width="1.2" height="8.4" fill="#000"/><rect x="105.46" y="0" width="1.2" height="8.4" fill="#000"/><rect x="109.64" y="0" width="1.2" height="8.4" fill="#000"/><rect x="113.83" y="0" width="1.2" height="8.4" fill="#000"/><rect x="118.02" y="0" width="1.2" height="8.4" fill="#000"/><rect x="122.21" y="0" width="1.2" height="8.4" fill="#000"/><rect x="126.4" y="0" width="1.2" height="8.4" fill="#000"/><rect x="130.59" y="0" width="1.2" height="8.4" fill="#000"/><rect x="134.78" y="0" width="1.2" height="8.4" fill="#000"/><rect x="138.97" y="0" width="1.2" height="8.4" fill="#000"/><rect x="143.16" y="0" width="1.2" height="8.4" fill="#000"/><rect x="147.34" y="0" width="1.2" height="8.4" fill="#000"/><rect x="151.53" y="0" width="1.2" height="8.4" fill="#000"/><rect x="155.72" y="0" width="1.2" height="8.4" fill="#000"/><rect x="159.91" y="0" width="1.2" height="8.4" fill="#000"/><rect x="164.1" y="0" width="1.2" height="8.4" fill="#000"/><rect x="168.29" y="0" width="1.2" height="8.4" fill="#000"/><rect x="172.48" y="0" width="1.2" height="8.4" fill="#000"/><rect x="176.67" y="0" width="1.2" height="8.4" fill="#000"/><rect x="180.86" y="0" width="1.2" height="8.4" fill="#000"/><rect x="185.04" y="0" width="1.2" height="8.4" fill="#000"/><rect x="189.23" y="0" width="1.2" height="8.4" fill="#000"/><rect x="193.42" y="0" width="1.2" height="8.4" fill="#000"/><rect x="197.61" y="0" width="1.2" height="8.4" fill="#000"/><rect x="201.8" y="0" width="1.2" height="8.4" fill="#000"/><rect x="205.99" y="0" width="1.2" height="8.4" fill="#000"/><rect x="210.18" y="0" width="1.2" height="8.4" fill="#000"/><rect x="214.37" y="0" width="1.2" height="8.4" fill="#000"/><rect x="218.56" y="0" width="1.2" height="8.4" fill="#000"/><rect x="222.74" y="0" width="1.2" height="8.4" fill="#000"/><rect x="226.93" y="0" width="1.2" height="8.4" fill="#000"/><rect x="231.12" y="0" width="1.2" height="8.4" fill="#000"/><rect x="235.31" y="0" width="1.2" height="8.4" fill="#000"/><rect x="239.5" y="0" width="1.2" height="8.4" fill="#000"/><rect x="243.69" y="0" width="1.2" height="8.4" fill="#000"/><rect x="247.88" y="0" width="1.2" height="8.4" fill="#000"/><rect x="252.07" y="0" width="1.2" height="8.4" fill="#000"/><rect x="256.26" y="0" width="1.2" height="8.4" fill="#000"/><rect x="260.44" y="0" width="1.2" height="8.4" fill="#000"/><rect x="264.63" y="0" width="1.2" height="8.4" fill="#000"/><rect x="268.82" y="0" width="1.2" height="8.4" fill="#000"/><rect x="273.01" y="0" width="1.2" height="8.4" fill="#000"/><rect x="277.2" y="0" width="1.2" height="8.4" fill="#000"/><rect x="281.39" y="0" width="1.2" height="8.4" fill="#000"/><rect x="285.58" y="0" width="1.2" height="8.4" fill="#000"/><rect x="289.77" y="0" width="1.2" height="8.4" fill="#000"/><rect x="293.96" y="0" width="1.2" height="8.4" fill="#000"/><rect x="298.14" y="0" width="1.2" height="8.4" fill="#000"/><rect x="302.33" y="0" width="1.2" height="8.4" fill="#000"/><rect x="306.52" y="0" width="1.2" height="8.4" fill="#000"/><rect x="310.71" y="0" width="1.2" height="8.4" fill="#000"/><rect x="314.9" y="0" width="1.2" height="8.4" fill="#000"/><rect x="319.09" y="0" width="1.2" height="8.4" fill="#000"/><rect x="323.28" y="0" width="1.2" height="8.4" fill="#000"/><rect x="327.47" y="0" width="1.2" height="8.4" fill="#000"/><rect x="331.66" y="0" width="1.2" height="8.4" fill="#000"/><rect x="335.84" y="0" width="1.2" height="8.4" fill="#000"/><rect x="340.03" y="0" width="1.2" height="8.4" fill="#000"/><rect x="344.22" y="0" width="1.2" height="8.4" fill="#000"/><rect x="348.41" y="0" width="1.2" height="8.4" fill="#000"/><rect x="352.6" y="0" width="1.2" height="8.4" fill="#000"/><rect x="356.79" y="0" width="1.2" height="8.4" fill="#000"/><rect x="360.98" y="0" width="1.2" height="8.4" fill="#000"/><rect x="365.17" y="0" width="1.2" height="8.4" fill="#000"/><rect x="369.36" y="0" width="1.2" height="8.4" fill="#000"/><rect x="373.54" y="0" width="1.2" height="8.4" fill="#000"/><rect x="377.73" y="0" width="1.2" height="8.4" fill="#000"/><rect x="381.92" y="0" width="1.2" height="8.4" fill="#000"/><rect x="386.11" y="0" width="1.2" height="8.4" fill="#000"/><rect x="390.3" y="0" width="1.2" height="8.4" fill="#000"/><rect x="394.49" y="0" width="1.2" height="8.4" fill="#000"/><rect x="398.68" y="0" width="1.2" height="8.4" fill="#000"/><rect x="402.87" y="0" width="1.2" height="8.4" fill="#000"/><rect x="407.06" y="0" width="1.2" height="8.4" fill="#000"/><rect x="411.24" y="0" width="1.2" height="8.4" fill="#000"/><rect x="415.43" y="0" width="1.2" height="8.4" fill="#000"/><rect x="419.62" y="0" width="1.2" height="8.4" fill="#000"/><rect x="423.81" y="0" width="1.2" height="8.4" fill="#000"/><rect x="428" y="0" width="1.2" height="8.4" fill="#000"/><rect x="432.19" y="0" width="1.2" height="8.4" fill="#000"/><rect x="436.38" y="0" width="1.2" height="8.4" fill="#000"/><rect x="440.57" y="0" width="1.2" height="8.4" fill="#000"/><rect x="444.76" y="0" width="1.2" height="8.4" fill="#000"/><rect x="448.94" y="0" width="1.2" height="8.4" fill="#000"/><rect x="453.13" y="0" width="1.2" height="8.4" fill="#000"/><rect x="457.32" y="0" width="1.2" height="8.4" fill="#000"/><rect x="461.51" y="0" width="1.2" height="8.4" fill="#000"/><rect x="465.7" y="0" width="1.2" height="8.4" fill="#000"/></svg>
<svg style="left:926.6px;top:202.4px;" width="18" height="17.5" viewBox="0 0 18 17.5"><path d="M9 0.3L17.6 17H0.4Z" fill="#0000fa"/></svg>
<svg style="left:1341.3px;top:202.4px;" width="18" height="17.5" viewBox="0 0 18 17.5"><path d="M9 0.3L17.6 17H0.4Z" fill="#e00000"/></svg>
<span class="s" style="left:1374.2px;top:154.9px;font-size:13.5px;letter-spacing:-0.4px">MHz</span>
<div style="left:1409.2px;top:143.4px;width:120.6px;height:18.8px;background:#fff;border:1px solid #e3e3e3;border-top-color:#bcbcbc;border-left-color:#dcdcdc"></div>
<span class="t" style="left:1413.5px;top:143.7px;color:#2020d0;font-size:12.5px">-2.691 MHz</span>
<div style="left:1512.5px;top:144.9px;width:15px;height:7.9px;border:1px solid #c2c2c2;background:linear-gradient(#f6f6f6,#e4e4e4)"></div>
<svg style="left:1512.5px;top:144.9px;" width="15" height="7.9" viewBox="0 0 15 7.9"><path d="M5.2 5.449999999999996L7.5 2.3499999999999956L9.8 5.449999999999996Z" fill="#7474b4"/></svg>
<div style="left:1512.5px;top:152.8px;width:15px;height:7.9px;border:1px solid #c2c2c2;background:linear-gradient(#f6f6f6,#e4e4e4)"></div>
<svg style="left:1512.5px;top:152.8px;" width="15" height="7.9" viewBox="0 0 15 7.9"><path d="M5.2 2.649999999999996L7.5 5.749999999999996L9.8 2.649999999999996Z" fill="#7474b4"/></svg>
<div style="left:1409.2px;top:170px;width:120.6px;height:21.8px;background:#fff;border:1px solid #e3e3e3;border-top-color:#bcbcbc;border-left-color:#dcdcdc"></div>
<span class="t" style="left:1413.5px;top:171.8px;font-size:13.5px">100</span>
<div style="left:1512.5px;top:171.5px;width:15px;height:9.4px;border:1px solid #c2c2c2;background:linear-gradient(#f6f6f6,#e4e4e4)"></div>
<svg style="left:1512.5px;top:171.5px;" width="15" height="9.4" viewBox="0 0 15 9.4"><path d="M5.2 6.200000000000003L7.5 3.1000000000000028L9.8 6.200000000000003Z" fill="#7474b4"/></svg>
<div style="left:1512.5px;top:180.9px;width:15px;height:9.4px;border:1px solid #c2c2c2;background:linear-gradient(#f6f6f6,#e4e4e4)"></div>
<svg style="left:1512.5px;top:180.9px;" width="15" height="9.4" viewBox="0 0 15 9.4"><path d="M5.2 3.400000000000003L7.5 6.500000000000003L9.8 3.400000000000003Z" fill="#7474b4"/></svg>
<div style="left:1409.2px;top:199.6px;width:120.6px;height:18.4px;background:#fff;border:1px solid #e3e3e3;border-top-color:#bcbcbc;border-left-color:#dcdcdc"></div>
<span class="t" style="left:1413.5px;top:199.7px;color:#d01010;font-size:12.5px">-2.291 MHz</span>
<div style="left:1512.5px;top:201.1px;width:15px;height:7.7px;border:1px solid #c2c2c2;background:linear-gradient(#f6f6f6,#e4e4e4)"></div>
<svg style="left:1512.5px;top:201.1px;" width="15" height="7.7" viewBox="0 0 15 7.7"><path d="M5.2 5.350000000000001L7.5 2.2500000000000013L9.8 5.350000000000001Z" fill="#7474b4"/></svg>
<div style="left:1512.5px;top:208.8px;width:15px;height:7.7px;border:1px solid #c2c2c2;background:linear-gradient(#f6f6f6,#e4e4e4)"></div>
<svg style="left:1512.5px;top:208.8px;" width="15" height="7.7" viewBox="0 0 15 7.7"><path d="M5.2 2.5500000000000016L7.5 5.650000000000001L9.8 2.5500000000000016Z" fill="#7474b4"/></svg>
<div style="left:1561.2px;top:156.3px;width:22.7px;height:21.3px;border:1px solid #707070;border-radius:3.5px;background:linear-gradient(#f4f4f4,#ebebeb 50%,#dddddd 51%,#d0d0d0);box-shadow:inset 0 0 0 1px #fcfcfc"></div>
<svg style="left:1562.52px;top:156.92px;" width="20.16" height="20.16" viewBox="0 0 18 18"><path d="M2.27 7.07 A7 7 0 0 1 14.73 4.98 L16.09 3.46 L14.43 9.86 L10.1 8.14 L11.79 7.05 A3.4 3.4 0 0 0 5.73 8.06Z" fill="#5a92dc" stroke="#3468b0" stroke-width=".6" stroke-linejoin="round"/><path d="M15.73 10.93 A7 7 0 0 1 3.27 13.02 L1.91 14.54 L3.57 8.14 L7.9 9.86 L6.21 10.95 A3.4 3.4 0 0 0 12.27 9.94Z" fill="#79abe8" stroke="#3468b0" stroke-width=".6" stroke-linejoin="round"/></svg>
<div style="left:873.7px;top:252.9px;width:13.4px;height:13.4px;border:1px solid #8e8f8f;border-radius:50%;background:radial-gradient(circle at 60% 60%,#fbfbfb 20%,#cfcfcf 95%)"></div>
<span class="s" style="left:895.5px;top:249.7px;">No scan</span>
<div style="left:1042px;top:252.9px;width:13.4px;height:13.4px;border:1px solid #8e8f8f;border-radius:50%;background:radial-gradient(circle at 60% 60%,#fbfbfb 20%,#cfcfcf 95%)"></div>
<div style="left:1045.1px;top:256px;width:7.2px;height:7.2px;border-radius:50%;background:radial-gradient(circle at 35% 30%,#9fd5f5,#2f6f9f 55%,#1a3f63);"></div>
<span class="s" style="left:1063.6px;top:249.7px;">Linear</span>
<div style="left:1210.6px;top:252.9px;width:13.4px;height:13.4px;border:1px solid #8e8f8f;border-radius:50%;background:radial-gradient(circle at 60% 60%,#fbfbfb 20%,#cfcfcf 95%)"></div>
<span class="s" style="left:1232px;top:249.7px;">Random</span>
<div style="left:1378.3px;top:252.9px;width:13.4px;height:13.4px;border:1px solid #8e8f8f;border-radius:50%;background:radial-gradient(circle at 60% 60%,#fbfbfb 20%,#cfcfcf 95%)"></div>
<span class="s" style="left:1400px;top:249.7px;">Explicit</span>
<span class="s" style="left:741.6px;top:301.5px;">blue_axial_f</span>
<div style="left:884.3px;top:337px;width:517.5px;height:1.2px;background:#000"></div>
<div style="left:944.8px;top:332.3px;width:1.1px;height:5.3px;background:#000"></div>
<span class="s c" style="left:642.2px;width:600px;top:315.4px;letter-spacing:-0.3px">2.3</span>
<div style="left:1048.2px;top:332.3px;width:1.1px;height:5.3px;background:#000"></div>
<span class="s c" style="left:745.6px;width:600px;top:315.4px;letter-spacing:-0.3px">2.4</span>
<div style="left:1151.3px;top:332.3px;width:1.1px;height:5.3px;background:#000"></div>
<span class="s c" style="left:848.7px;width:600px;top:315.4px;letter-spacing:-0.3px">2.5</span>
<div style="left:1254.8px;top:332.3px;width:1.1px;height:5.3px;background:#000"></div>
<span class="s c" style="left:952.2px;width:600px;top:315.4px;letter-spacing:-0.3px">2.6</span>
<div style="left:1358.9px;top:332.3px;width:1.1px;height:5.3px;background:#000"></div>
<span class="s c" style="left:1056.3px;width:600px;top:315.4px;letter-spacing:-0.3px">2.7</span>
<svg style="left:884px;top:337.6px;" width="520" height="9" viewBox="0 0 520 9"><rect x="51" y="0" width="1.2" height="8.4" fill="#000"/><rect x="55.19" y="0" width="1.2" height="8.4" fill="#000"/><rect x="59.38" y="0" width="1.2" height="8.4" fill="#000"/><rect x="63.57" y="0" width="1.2" height="8.4" fill="#000"/><rect x="67.76" y="0" width="1.2" height="8.4" fill="#000"/><rect x="71.94" y="0" width="1.2" height="8.4" fill="#000"/><rect x="76.13" y="0" width="1.2" height="8.4" fill="#000"/><rect x="80.32" y="0" width="1.2" height="8.4" fill="#000"/><rect x="84.51" y="0" width="1.2" height="8.4" fill="#000"/><rect x="88.7" y="0" width="1.2" height="8.4" fill="#000"/><rect x="92.89" y="0" width="1.2" height="8.4" fill="#000"/><rect x="97.08" y="0" width="1.2" height="8.4" fill="#000"/><rect x="101.27" y="0" width="1.2" height="8.4" fill="#000"/><rect x="105.46" y="0" width="1.2" height="8.4" fill="#000"/><rect x="109.64" y="0" width="1.2" height="8.4" fill="#000"/><rect x="113.83" y="0" width="1.2" height="8.4" fill="#000"/><rect x="118.02" y="0" width="1.2" height="8.4" fill="#000"/><rect x="122.21" y="0" width="1.2" height="8.4" fill="#000"/><rect x="126.4" y="0" width="1.2" height="8.4" fill="#000"/><rect x="130.59" y="0" width="1.2" height="8.4" fill="#000"/><rect x="134.78" y="0" width="1.2" height="8.4" fill="#000"/><rect x="138.97" y="0" width="1.2" height="8.4" fill="#000"/><rect x="143.16" y="0" width="1.2" height="8.4" fill="#000"/><rect x="147.34" y="0" width="1.2" height="8.4" fill="#000"/><rect x="151.53" y="0" width="1.2" height="8.4" fill="#000"/><rect x="155.72" y="0" width="1.2" height="8.4" fill="#000"/><rect x="159.91" y="0" width="1.2" height="8.4" fill="#000"/><rect x="164.1" y="0" width="1.2" height="8.4" fill="#000"/><rect x="168.29" y="0" width="1.2" height="8.4" fill="#000"/><rect x="172.48" y="0" width="1.2" height="8.4" fill="#000"/><rect x="176.67" y="0" width="1.2" height="8.4" fill="#000"/><rect x="180.86" y="0" width="1.2" height="8.4" fill="#000"/><rect x="185.04" y="0" width="1.2" height="8.4" fill="#000"/><rect x="189.23" y="0" width="1.2" height="8.4" fill="#000"/><rect x="193.42" y="0" width="1.2" height="8.4" fill="#000"/><rect x="197.61" y="0" width="1.2" height="8.4" fill="#000"/><rect x="201.8" y="0" width="1.2" height="8.4" fill="#000"/><rect x="205.99" y="0" width="1.2" height="8.4" fill="#000"/><rect x="210.18" y="0" width="1.2" height="8.4" fill="#000"/><rect x="214.37" y="0" width="1.2" height="8.4" fill="#000"/><rect x="218.56" y="0" width="1.2" height="8.4" fill="#000"/><rect x="222.74" y="0" width="1.2" height="8.4" fill="#000"/><rect x="226.93" y="0" width="1.2" height="8.4" fill="#000"/><rect x="231.12" y="0" width="1.2" height="8.4" fill="#000"/><rect x="235.31" y="0" width="1.2" height="8.4" fill="#000"/><rect x="239.5" y="0" width="1.2" height="8.4" fill="#000"/><rect x="243.69" y="0" width="1.2" height="8.4" fill="#000"/><rect x="247.88" y="0" width="1.2" height="8.4" fill="#000"/><rect x="252.07" y="0" width="1.2" height="8.4" fill="#000"/><rect x="256.26" y="0" width="1.2" height="8.4" fill="#000"/><rect x="260.44" y="0" width="1.2" height="8.4" fill="#000"/><rect x="264.63" y="0" width="1.2" height="8.4" fill="#000"/><rect x="268.82" y="0" width="1.2" height="8.4" fill="#000"/><rect x="273.01" y="0" width="1.2" height="8.4" fill="#000"/><rect x="277.2" y="0" width="1.2" height="8.4" fill="#000"/><rect x="281.39" y="0" width="1.2" height="8.4" fill="#000"/><rect x="285.58" y="0" width="1.2" height="8.4" fill="#000"/><rect x="289.77" y="0" width="1.2" height="8.4" fill="#000"/><rect x="293.96" y="0" width="1.2" height="8.4" fill="#000"/><rect x="298.14" y="0" width="1.2" height="8.4" fill="#000"/><rect x="302.33" y="0" width="1.2" height="8.4" fill="#000"/><rect x="306.52" y="0" width="1.2" height="8.4" fill="#000"/><rect x="310.71" y="0" width="1.2" height="8.4" fill="#000"/><rect x="314.9" y="0" width="1.2" height="8.4" fill="#000"/><rect x="319.09" y="0" width="1.2" height="8.4" fill="#000"/><rect x="323.28" y="0" width="1.2" height="8.4" fill="#000"/><rect x="327.47" y="0" width="1.2" height="8.4" fill="#000"/><rect x="331.66" y="0" width="1.2" height="8.4" fill="#000"/><rect x="335.84" y="0" width="1.2" height="8.4" fill="#000"/><rect x="340.03" y="0" width="1.2" height="8.4" fill="#000"/><rect x="344.22" y="0" width="1.2" height="8.4" fill="#000"/><rect x="348.41" y="0" width="1.2" height="8.4" fill="#000"/><rect x="352.6" y="0" width="1.2" height="8.4" fill="#000"/><rect x="356.79" y="0" width="1.2" height="8.4" fill="#000"/><rect x="360.98" y="0" width="1.2" height="8.4" fill="#000"/><rect x="365.17" y="0" width="1.2" height="8.4" fill="#000"/><rect x="369.36" y="0" width="1.2" height="8.4" fill="#000"/><rect x="373.54" y="0" width="1.2" height="8.4" fill="#000"/><rect x="377.73" y="0" width="1.2" height="8.4" fill="#000"/><rect x="381.92" y="0" width="1.2" height="8.4" fill="#000"/><rect x="386.11" y="0" width="1.2" height="8.4" fill="#000"/><rect x="390.3" y="0" width="1.2" height="8.4" fill="#000"/><rect x="394.49" y="0" width="1.2" height="8.4" fill="#000"/><rect x="398.68" y="0" width="1.2" height="8.4" fill="#000"/><rect x="402.87" y="0" width="1.2" height="8.4" fill="#000"/><rect x="407.06" y="0" width="1.2" height="8.4" fill="#000"/><rect x="411.24" y="0" width="1.2" height="8.4" fill="#000"/><rect x="415.43" y="0" width="1.2" height="8.4" fill="#000"/><rect x="419.62" y="0" width="1.2" height="8.4" fill="#000"/><rect x="423.81" y="0" width="1.2" height="8.4" fill="#000"/><rect x="428" y="0" width="1.2" height="8.4" fill="#000"/><rect x="432.19" y="0" width="1.2" height="8.4" fill="#000"/><rect x="436.38" y="0" width="1.2" height="8.4" fill="#000"/><rect x="440.57" y="0" width="1.2" height="8.4" fill="#000"/><rect x="444.76" y="0" width="1.2" height="8.4" fill="#000"/><rect x="448.94" y="0" width="1.2" height="8.4" fill="#000"/><rect x="453.13" y="0" width="1.2" height="8.4" fill="#000"/><rect x="457.32" y="0" width="1.2" height="8.4" fill="#000"/><rect x="461.51" y="0" width="1.2" height="8.4" fill="#000"/><rect x="465.7" y="0" width="1.2" height="8.4" fill="#000"/></svg>
<svg style="left:926.6px;top:345.6px;" width="18" height="17.5" viewBox="0 0 18 17.5"><path d="M9 0.3L17.6 17H0.4Z" fill="#0000fa"/></svg>
<svg style="left:1341.3px;top:345.6px;" width="18" height="17.5" viewBox="0 0 18 17.5"><path d="M9 0.3L17.6 17H0.4Z" fill="#e00000"/></svg>
<span class="s" style="left:1374.2px;top:298.1px;font-size:13.5px;letter-spacing:-0.4px">MHz</span>
<div style="left:1409.2px;top:286.6px;width:120.6px;height:18.8px;background:#fff;border:1px solid #e3e3e3;border-top-color:#bcbcbc;border-left-color:#dcdcdc"></div>
<span class="t" style="left:1413.5px;top:286.9px;color:#2020d0;font-size:12.5px">2.291 MHz</span>
<div style="left:1512.5px;top:288.1px;width:15px;height:7.9px;border:1px solid #c2c2c2;background:linear-gradient(#f6f6f6,#e4e4e4)"></div>
<svg style="left:1512.5px;top:288.1px;" width="15" height="7.9" viewBox="0 0 15 7.9"><path d="M5.2 5.449999999999989L7.5 2.3499999999999885L9.8 5.449999999999989Z" fill="#7474b4"/></svg>
<div style="left:1512.5px;top:296px;width:15px;height:7.9px;border:1px solid #c2c2c2;background:linear-gradient(#f6f6f6,#e4e4e4)"></div>
<svg style="left:1512.5px;top:296px;" width="15" height="7.9" viewBox="0 0 15 7.9"><path d="M5.2 2.649999999999989L7.5 5.7499999999999885L9.8 2.649999999999989Z" fill="#7474b4"/></svg>
<div style="left:1409.2px;top:313.2px;width:120.6px;height:21.8px;background:#fff;border:1px solid #e3e3e3;border-top-color:#bcbcbc;border-left-color:#dcdcdc"></div>
<span class="t" style="left:1413.5px;top:315px;font-size:13.5px">100</span>
<div style="left:1512.5px;top:314.7px;width:15px;height:9.4px;border:1px solid #c2c2c2;background:linear-gradient(#f6f6f6,#e4e4e4)"></div>
<svg style="left:1512.5px;top:314.7px;" width="15" height="9.4" viewBox="0 0 15 9.4"><path d="M5.2 6.200000000000003L7.5 3.1000000000000028L9.8 6.200000000000003Z" fill="#7474b4"/></svg>
<div style="left:1512.5px;top:324.1px;width:15px;height:9.4px;border:1px solid #c2c2c2;background:linear-gradient(#f6f6f6,#e4e4e4)"></div>
<svg style="left:1512.5px;top:324.1px;" width="15" height="9.4" viewBox="0 0 15 9.4"><path d="M5.2 3.400000000000003L7.5 6.500000000000003L9.8 3.400000000000003Z" fill="#7474b4"/></svg>
<div style="left:1409.2px;top:342.8px;width:120.6px;height:18.4px;background:#fff;border:1px solid #e3e3e3;border-top-color:#bcbcbc;border-left-color:#dcdcdc"></div>
<span class="t" style="left:1413.5px;top:342.9px;color:#d01010;font-size:12.5px">2.691 MHz</span>
<div style="left:1512.5px;top:344.3px;width:15px;height:7.7px;border:1px solid #c2c2c2;background:linear-gradient(#f6f6f6,#e4e4e4)"></div>
<svg style="left:1512.5px;top:344.3px;" width="15" height="7.7" viewBox="0 0 15 7.7"><path d="M5.2 5.3500000000000085L7.5 2.2500000000000084L9.8 5.3500000000000085Z" fill="#7474b4"/></svg>
<div style="left:1512.5px;top:352px;width:15px;height:7.7px;border:1px solid #c2c2c2;background:linear-gradient(#f6f6f6,#e4e4e4)"></div>
<svg style="left:1512.5px;top:352px;" width="15" height="7.7" viewBox="0 0 15 7.7"><path d="M5.2 2.5500000000000087L7.5 5.650000000000008L9.8 2.5500000000000087Z" fill="#7474b4"/></svg>
<div style="left:1561.2px;top:299.5px;width:22.7px;height:21.3px;border:1px solid #707070;border-radius:3.5px;background:linear-gradient(#f4f4f4,#ebebeb 50%,#dddddd 51%,#d0d0d0);box-shadow:inset 0 0 0 1px #fcfcfc"></div>
<svg style="left:1562.52px;top:300.12px;" width="20.16" height="20.16" viewBox="0 0 18 18"><path d="M2.27 7.07 A7 7 0 0 1 14.73 4.98 L16.09 3.46 L14.43 9.86 L10.1 8.14 L11.79 7.05 A3.4 3.4 0 0 0 5.73 8.06Z" fill="#5a92dc" stroke="#3468b0" stroke-width=".6" stroke-linejoin="round"/><path d="M15.73 10.93 A7 7 0 0 1 3.27 13.02 L1.91 14.54 L3.57 8.14 L7.9 9.86 L6.21 10.95 A3.4 3.4 0 0 0 12.27 9.94Z" fill="#79abe8" stroke="#3468b0" stroke-width=".6" stroke-linejoin="round"/></svg>
<span class="s" style="left:741.6px;top:395.6px;">t_pulse</span>
<div style="left:865px;top:382.3px;width:684.5px;height:44.2px;background:#fff;border:1px solid #e3e3e3;border-top-color:#bcbcbc;border-left-color:#dcdcdc"></div>
<span class="s" style="left:867.8px;top:395.6px;">31.250 us</span>
<div style="left:1517.3px;top:385.1px;width:30.7px;height:19.3px;border:1px solid #c2c2c2;background:linear-gradient(#f6f6f6,#e4e4e4)"></div>
<svg style="left:1517.3px;top:385.1px;" width="30.7" height="19.3" viewBox="0 0 30.7 19.3"><path d="M13.050000000000022 11.149999999999991L15.350000000000023 8.049999999999992L17.650000000000023 11.149999999999991Z" fill="#7474b4"/></svg>
<div style="left:1517.3px;top:404.4px;width:30.7px;height:19.3px;border:1px solid #c2c2c2;background:linear-gradient(#f6f6f6,#e4e4e4)"></div>
<svg style="left:1517.3px;top:404.4px;" width="30.7" height="19.3" viewBox="0 0 30.7 19.3"><path d="M13.050000000000022 8.34999999999999L15.350000000000023 11.449999999999992L17.650000000000023 8.34999999999999Z" fill="#7474b4"/></svg>
<div style="left:1561.2px;top:393.3px;width:22.7px;height:21.3px;border:1px solid #707070;border-radius:3.5px;background:linear-gradient(#f4f4f4,#ebebeb 50%,#dddddd 51%,#d0d0d0);box-shadow:inset 0 0 0 1px #fcfcfc"></div>
<svg style="left:1562.52px;top:393.92px;" width="20.16" height="20.16" viewBox="0 0 18 18"><path d="M2.27 7.07 A7 7 0 0 1 14.73 4.98 L16.09 3.46 L14.43 9.86 L10.1 8.14 L11.79 7.05 A3.4 3.4 0 0 0 5.73 8.06Z" fill="#5a92dc" stroke="#3468b0" stroke-width=".6" stroke-linejoin="round"/><path d="M15.73 10.93 A7 7 0 0 1 3.27 13.02 L1.91 14.54 L3.57 8.14 L7.9 9.86 L6.21 10.95 A3.4 3.4 0 0 0 12.27 9.94Z" fill="#79abe8" stroke="#3468b0" stroke-width=".6" stroke-linejoin="round"/></svg>
<span class="s" style="left:741.6px;top:439.6px;">repetitions</span>
<div style="left:865px;top:427px;width:684.5px;height:44px;background:#fff;border:1px solid #e3e3e3;border-top-color:#bcbcbc;border-left-color:#dcdcdc"></div>
<span class="s" style="left:867.8px;top:439.6px;">100</span>
<div style="left:1517.3px;top:429.8px;width:30.7px;height:19.2px;border:1px solid #c2c2c2;background:linear-gradient(#f6f6f6,#e4e4e4)"></div>
<svg style="left:1517.3px;top:429.8px;" width="30.7" height="19.2" viewBox="0 0 30.7 19.2"><path d="M13.050000000000022 11.099999999999994L15.350000000000023 7.999999999999995L17.650000000000023 11.099999999999994Z" fill="#7474b4"/></svg>
<div style="left:1517.3px;top:449px;width:30.7px;height:19.2px;border:1px solid #c2c2c2;background:linear-gradient(#f6f6f6,#e4e4e4)"></div>
<svg style="left:1517.3px;top:449px;" width="30.7" height="19.2" viewBox="0 0 30.7 19.2"><path d="M13.050000000000022 8.299999999999994L15.350000000000023 11.399999999999995L17.650000000000023 8.299999999999994Z" fill="#7474b4"/></svg>
<div style="left:1561.2px;top:437.3px;width:22.7px;height:21.3px;border:1px solid #707070;border-radius:3.5px;background:linear-gradient(#f4f4f4,#ebebeb 50%,#dddddd 51%,#d0d0d0);box-shadow:inset 0 0 0 1px #fcfcfc"></div>
<svg style="left:1562.52px;top:437.92px;" width="20.16" height="20.16" viewBox="0 0 18 18"><path d="M2.27 7.07 A7 7 0 0 1 14.73 4.98 L16.09 3.46 L14.43 9.86 L10.1 8.14 L11.79 7.05 A3.4 3.4 0 0 0 5.73 8.06Z" fill="#5a92dc" stroke="#3468b0" stroke-width=".6" stroke-linejoin="round"/><path d="M15.73 10.93 A7 7 0 0 1 3.27 13.02 L1.91 14.54 L3.57 8.14 L7.9 9.86 L6.21 10.95 A3.4 3.4 0 0 0 12.27 9.94Z" fill="#79abe8" stroke="#3468b0" stroke-width=".6" stroke-linejoin="round"/></svg>
<span class="s" style="left:741.6px;top:483.9px;">nbins</span>
<div style="left:865px;top:471.6px;width:684.5px;height:42.6px;background:#fff;border:1px solid #e3e3e3;border-top-color:#bcbcbc;border-left-color:#dcdcdc"></div>
<span class="s" style="left:867.8px;top:483.9px;">100</span>
<div style="left:1517.3px;top:474.4px;width:30.7px;height:18.5px;border:1px solid #c2c2c2;background:linear-gradient(#f6f6f6,#e4e4e4)"></div>
<svg style="left:1517.3px;top:474.4px;" width="30.7" height="18.5" viewBox="0 0 30.7 18.5"><path d="M13.050000000000022 10.75L15.350000000000023 7.65L17.650000000000023 10.75Z" fill="#7474b4"/></svg>
<div style="left:1517.3px;top:492.9px;width:30.7px;height:18.5px;border:1px solid #c2c2c2;background:linear-gradient(#f6f6f6,#e4e4e4)"></div>
<svg style="left:1517.3px;top:492.9px;" width="30.7" height="18.5" viewBox="0 0 30.7 18.5"><path d="M13.050000000000022 7.95L15.350000000000023 11.05L17.650000000000023 7.95Z" fill="#7474b4"/></svg>
<div style="left:1561.2px;top:481.6px;width:22.7px;height:21.3px;border:1px solid #707070;border-radius:3.5px;background:linear-gradient(#f4f4f4,#ebebeb 50%,#dddddd 51%,#d0d0d0);box-shadow:inset 0 0 0 1px #fcfcfc"></div>
<svg style="left:1562.52px;top:482.22px;" width="20.16" height="20.16" viewBox="0 0 18 18"><path d="M2.27 7.07 A7 7 0 0 1 14.73 4.98 L16.09 3.46 L14.43 9.86 L10.1 8.14 L11.79 7.05 A3.4 3.4 0 0 0 5.73 8.06Z" fill="#5a92dc" stroke="#3468b0" stroke-width=".6" stroke-linejoin="round"/><path d="M15.73 10.93 A7 7 0 0 1 3.27 13.02 L1.91 14.54 L3.57 8.14 L7.9 9.86 L6.21 10.95 A3.4 3.4 0 0 0 12.27 9.94Z" fill="#79abe8" stroke="#3468b0" stroke-width=".6" stroke-linejoin="round"/></svg>
<span class="s" style="left:741.6px;top:527.8px;">save_fit</span>
<div style="left:864.2px;top:529.8px;width:13.5px;height:13.5px;border:1px solid #8e8f8f;background:linear-gradient(135deg,#d8d8d8,#f6f6f6 70%);box-shadow:inset 0 0 0 1px #f4f4f4, inset 0 0 0 2px #c4c4c4"></div>
<div style="left:1561.2px;top:525.5px;width:22.7px;height:21.3px;border:1px solid #707070;border-radius:3.5px;background:linear-gradient(#f4f4f4,#ebebeb 50%,#dddddd 51%,#d0d0d0);box-shadow:inset 0 0 0 1px #fcfcfc"></div>
<svg style="left:1562.52px;top:526.12px;" width="20.16" height="20.16" viewBox="0 0 18 18"><path d="M2.27 7.07 A7 7 0 0 1 14.73 4.98 L16.09 3.46 L14.43 9.86 L10.1 8.14 L11.79 7.05 A3.4 3.4 0 0 0 5.73 8.06Z" fill="#5a92dc" stroke="#3468b0" stroke-width=".6" stroke-linejoin="round"/><path d="M15.73 10.93 A7 7 0 0 1 3.27 13.02 L1.91 14.54 L3.57 8.14 L7.9 9.86 L6.21 10.95 A3.4 3.4 0 0 0 12.27 9.94Z" fill="#79abe8" stroke="#3468b0" stroke-width=".6" stroke-linejoin="round"/></svg>
<span class="s" style="left:741.6px;top:572.3px;">electrode</span>
<div style="left:865px;top:559.3px;width:684.5px;height:43.7px;background:#fff;border:1px solid #e3e3e3;border-top-color:#bcbcbc;border-left-color:#dcdcdc"></div>
<span class="s" style="left:867.8px;top:572.3px;">1</span>
<div style="left:1517.3px;top:562.1px;width:30.7px;height:19.05px;border:1px solid #c2c2c2;background:linear-gradient(#f6f6f6,#e4e4e4)"></div>
<svg style="left:1517.3px;top:562.1px;" width="30.7" height="19.05" viewBox="0 0 30.7 19.05"><path d="M13.050000000000022 11.025000000000034L15.350000000000023 7.9250000000000345L17.650000000000023 11.025000000000034Z" fill="#7474b4"/></svg>
<div style="left:1517.3px;top:581.15px;width:30.7px;height:19.05px;border:1px solid #c2c2c2;background:linear-gradient(#f6f6f6,#e4e4e4)"></div>
<svg style="left:1517.3px;top:581.15px;" width="30.7" height="19.05" viewBox="0 0 30.7 19.05"><path d="M13.050000000000022 8.225000000000033L15.350000000000023 11.325000000000035L17.650000000000023 8.225000000000033Z" fill="#7474b4"/></svg>
<div style="left:1561.2px;top:570px;width:22.7px;height:21.3px;border:1px solid #707070;border-radius:3.5px;background:linear-gradient(#f4f4f4,#ebebeb 50%,#dddddd 51%,#d0d0d0);box-shadow:inset 0 0 0 1px #fcfcfc"></div>
<svg style="left:1562.52px;top:570.62px;" width="20.16" height="20.16" viewBox="0 0 18 18"><path d="M2.27 7.07 A7 7 0 0 1 14.73 4.98 L16.09 3.46 L14.43 9.86 L10.1 8.14 L11.79 7.05 A3.4 3.4 0 0 0 5.73 8.06Z" fill="#5a92dc" stroke="#3468b0" stroke-width=".6" stroke-linejoin="round"/><path d="M15.73 10.93 A7 7 0 0 1 3.27 13.02 L1.91 14.54 L3.57 8.14 L7.9 9.86 L6.21 10.95 A3.4 3.4 0 0 0 12.27 9.94Z" fill="#79abe8" stroke="#3468b0" stroke-width=".6" stroke-linejoin="round"/></svg>
<div style="left:716.1px;top:603px;width:833.9px;height:18.8px;background:#676767"></div>
<span class="sb" style="left:719.3px;top:603.3px;color:#dcdcf4;font-size:13.5px;letter-spacing:-0.25px">Detection</span>
<svg style="left:701.8px;top:607.9px;" width="8" height="8" viewBox="0 0 8 8"><path d="M6.8 0.8V6.8H0.8Z" fill="#555" stroke="#222" stroke-width="1" stroke-linejoin="round"/></svg>
<span class="s" style="left:741.6px;top:635.5px;letter-spacing:-0.05px">reference_histogram</span>
<div style="left:865px;top:623px;width:684.8px;height:43px;border:1px solid #6e6e6e;border-radius:3px;background:linear-gradient(#f0f0f0,#e9e9e9 45%,#dadada 52%,#d0d0d0);box-shadow:inset 0 0 0 1px #fafafa"></div>
<span class="s" style="left:869px;top:635.5px;">Use manual detection parameters</span>
<svg style="left:1535.5px;top:641.7px;" width="8" height="5" viewBox="0 0 8 5"><path d="M0 0H8L4 4.6Z" fill="#000"/></svg>
<div style="left:1561.2px;top:633px;width:22.7px;height:21.3px;border:1px solid #707070;border-radius:3.5px;background:linear-gradient(#f4f4f4,#ebebeb 50%,#dddddd 51%,#d0d0d0);box-shadow:inset 0 0 0 1px #fcfcfc"></div>
<svg style="left:1562.52px;top:633.62px;" width="20.16" height="20.16" viewBox="0 0 18 18"><path d="M2.27 7.07 A7 7 0 0 1 14.73 4.98 L16.09 3.46 L14.43 9.86 L10.1 8.14 L11.79 7.05 A3.4 3.4 0 0 0 5.73 8.06Z" fill="#5a92dc" stroke="#3468b0" stroke-width=".6" stroke-linejoin="round"/><path d="M15.73 10.93 A7 7 0 0 1 3.27 13.02 L1.91 14.54 L3.57 8.14 L7.9 9.86 L6.21 10.95 A3.4 3.4 0 0 0 12.27 9.94Z" fill="#79abe8" stroke="#3468b0" stroke-width=".6" stroke-linejoin="round"/></svg>
<span class="s" style="left:741.6px;top:679.7px;">dds_bd1_frequency</span>
<div style="left:865px;top:667.5px;width:684.5px;height:42.5px;background:#fff;border:1px solid #e3e3e3;border-top-color:#bcbcbc;border-left-color:#dcdcdc"></div>
<span class="s" style="left:867.8px;top:679.7px;">330.00 MHz</span>
<div style="left:1517.3px;top:670.3px;width:30.7px;height:18.45px;border:1px solid #c2c2c2;background:linear-gradient(#f6f6f6,#e4e4e4)"></div>
<svg style="left:1517.3px;top:670.3px;" width="30.7" height="18.45" viewBox="0 0 30.7 18.45"><path d="M13.050000000000022 10.725000000000023L15.350000000000023 7.625000000000023L17.650000000000023 10.725000000000023Z" fill="#7474b4"/></svg>
<div style="left:1517.3px;top:688.75px;width:30.7px;height:18.45px;border:1px solid #c2c2c2;background:linear-gradient(#f6f6f6,#e4e4e4)"></div>
<svg style="left:1517.3px;top:688.75px;" width="30.7" height="18.45" viewBox="0 0 30.7 18.45"><path d="M13.050000000000022 7.925000000000023L15.350000000000023 11.025000000000023L17.650000000000023 7.925000000000023Z" fill="#7474b4"/></svg>
<div style="left:1561.2px;top:677.4px;width:22.7px;height:21.3px;border:1px solid #707070;border-radius:3.5px;background:linear-gradient(#f4f4f4,#ebebeb 50%,#dddddd 51%,#d0d0d0);box-shadow:inset 0 0 0 1px #fcfcfc"></div>
<svg style="left:1562.52px;top:678.02px;" width="20.16" height="20.16" viewBox="0 0 18 18"><path d="M2.27 7.07 A7 7 0 0 1 14.73 4.98 L16.09 3.46 L14.43 9.86 L10.1 8.14 L11.79 7.05 A3.4 3.4 0 0 0 5.73 8.06Z" fill="#5a92dc" stroke="#3468b0" stroke-width=".6" stroke-linejoin="round"/><path d="M15.73 10.93 A7 7 0 0 1 3.27 13.02 L1.91 14.54 L3.57 8.14 L7.9 9.86 L6.21 10.95 A3.4 3.4 0 0 0 12.27 9.94Z" fill="#79abe8" stroke="#3468b0" stroke-width=".6" stroke-linejoin="round"/></svg>
<span class="s" style="left:741.6px;top:723.6px;">t_detect</span>
<div style="left:865px;top:710.6px;width:684.5px;height:42.6px;background:#fff;border:1px solid #e3e3e3;border-top-color:#bcbcbc;border-left-color:#dcdcdc"></div>
<span class="s" style="left:867.8px;top:723.6px;">100.00 us</span>
<div style="left:1517.3px;top:713.4px;width:30.7px;height:18.5px;border:1px solid #c2c2c2;background:linear-gradient(#f6f6f6,#e4e4e4)"></div>
<svg style="left:1517.3px;top:713.4px;" width="30.7" height="18.5" viewBox="0 0 30.7 18.5"><path d="M13.050000000000022 10.750000000000028L15.350000000000023 7.650000000000029L17.650000000000023 10.750000000000028Z" fill="#7474b4"/></svg>
<div style="left:1517.3px;top:731.9px;width:30.7px;height:18.5px;border:1px solid #c2c2c2;background:linear-gradient(#f6f6f6,#e4e4e4)"></div>
<svg style="left:1517.3px;top:731.9px;" width="30.7" height="18.5" viewBox="0 0 30.7 18.5"><path d="M13.050000000000022 7.950000000000029L15.350000000000023 11.05000000000003L17.650000000000023 7.950000000000029Z" fill="#7474b4"/></svg>
<div style="left:1561.2px;top:721.3px;width:22.7px;height:21.3px;border:1px solid #707070;border-radius:3.5px;background:linear-gradient(#f4f4f4,#ebebeb 50%,#dddddd 51%,#d0d0d0);box-shadow:inset 0 0 0 1px #fcfcfc"></div>
<svg style="left:1562.52px;top:721.92px;" width="20.16" height="20.16" viewBox="0 0 18 18"><path d="M2.27 7.07 A7 7 0 0 1 14.73 4.98 L16.09 3.46 L14.43 9.86 L10.1 8.14 L11.79 7.05 A3.4 3.4 0 0 0 5.73 8.06Z" fill="#5a92dc" stroke="#3468b0" stroke-width=".6" stroke-linejoin="round"/><path d="M15.73 10.93 A7 7 0 0 1 3.27 13.02 L1.91 14.54 L3.57 8.14 L7.9 9.86 L6.21 10.95 A3.4 3.4 0 0 0 12.27 9.94Z" fill="#79abe8" stroke="#3468b0" stroke-width=".6" stroke-linejoin="round"/></svg>
<div style="left:1117.5px;top:765.4px;width:178.1px;height:24.2px;border:1px solid #707070;border-radius:3px;background:linear-gradient(#f2f2f2,#ebebeb 48%,#dddddd 52%,#cfcfcf);box-shadow:inset 0 0 0 1px #fcfcfc;"></div>
<svg style="left:1118.9px;top:767.4px;" width="19.8" height="19.8" viewBox="0 0 18 18"><path d="M2.27 7.07 A7 7 0 0 1 14.73 4.98 L16.09 3.46 L14.43 9.86 L10.1 8.14 L11.79 7.05 A3.4 3.4 0 0 0 5.73 8.06Z" fill="#5a92dc" stroke="#3468b0" stroke-width=".6" stroke-linejoin="round"/><path d="M15.73 10.93 A7 7 0 0 1 3.27 13.02 L1.91 14.54 L3.57 8.14 L7.9 9.86 L6.21 10.95 A3.4 3.4 0 0 0 12.27 9.94Z" fill="#79abe8" stroke="#3468b0" stroke-width=".6" stroke-linejoin="round"/></svg>
<span class="s" style="left:1142px;top:767.8px;">Recompute all arguments</span>
<div style="left:693px;top:863px;width:13.5px;height:13.5px;border:1px solid #8e8f8f;background:linear-gradient(135deg,#d8d8d8,#f6f6f6 70%);box-shadow:inset 0 0 0 1px #f4f4f4, inset 0 0 0 2px #c4c4c4"></div>
<span class="t" style="left:711.8px;top:860.8px;">Due date:</span>
<div style="left:777.7px;top:859.7px;width:142.9px;height:20.5px;background:#fff;border:1px solid #e3e3e3;border-top-color:#bcbcbc;border-left-color:#dcdcdc"></div>
<span class="t" style="left:781px;top:861.1px;">Aug 4 2016 00:00:00</span>
<div style="left:905.5px;top:861.5px;width:13.5px;height:8.5px;border:1px solid #c2c2c2;background:linear-gradient(#f6f6f6,#e4e4e4)"></div>
<svg style="left:905.5px;top:861.5px;" width="13.5" height="8.5" viewBox="0 0 13.5 8.5"><path d="M4.45 5.75L6.75 2.65L9.05 5.75Z" fill="#7474b4"/></svg>
<div style="left:905.5px;top:870px;width:13.5px;height:8.5px;border:1px solid #c2c2c2;background:linear-gradient(#f6f6f6,#e4e4e4)"></div>
<svg style="left:905.5px;top:870px;" width="13.5" height="8.5" viewBox="0 0 13.5 8.5"><path d="M4.45 2.95L6.75 6.05L9.05 2.95Z" fill="#7474b4"/></svg>
<span class="t" style="left:927.5px;top:861.1px;letter-spacing:-0.7px">Pipeline:</span>
<div style="left:982.7px;top:859.7px;width:303.5px;height:20.5px;background:#fff;border:1px solid #e3e3e3;border-top-color:#bcbcbc;border-left-color:#dcdcdc"></div>
<span class="t" style="left:986px;top:861.1px;">main</span>
<span class="t" style="left:692px;top:889.3px;">Priority:</span>
<div style="left:777.7px;top:887.7px;width:142.9px;height:20.5px;background:#fff;border:1px solid #e3e3e3;border-top-color:#bcbcbc;border-left-color:#dcdcdc"></div>
<span class="t" style="left:781px;top:889.3px;">0</span>
<div style="left:905.5px;top:889.5px;width:13.5px;height:8.5px;border:1px solid #c2c2c2;background:linear-gradient(#f6f6f6,#e4e4e4)"></div>
<svg style="left:905.5px;top:889.5px;" width="13.5" height="8.5" viewBox="0 0 13.5 8.5"><path d="M4.45 5.75L6.75 2.65L9.05 5.75Z" fill="#7474b4"/></svg>
<div style="left:905.5px;top:898px;width:13.5px;height:8.5px;border:1px solid #c2c2c2;background:linear-gradient(#f6f6f6,#e4e4e4)"></div>
<svg style="left:905.5px;top:898px;" width="13.5" height="8.5" viewBox="0 0 13.5 8.5"><path d="M4.45 2.95L6.75 6.05L9.05 2.95Z" fill="#7474b4"/></svg>
<div style="left:928.4px;top:890.3px;width:13.5px;height:13.5px;border:1px solid #8e8f8f;background:linear-gradient(135deg,#d8d8d8,#f6f6f6 70%);box-shadow:inset 0 0 0 1px #f4f4f4, inset 0 0 0 2px #c4c4c4"></div>
<span class="t" style="left:947.4px;top:888.1px;">Flush</span>
<span class="t" style="left:692px;top:918.8px;letter-spacing:-0.6px">Logging level:</span>
<div style="left:777.2px;top:917.3px;width:144.6px;height:21.1px;border:1px solid #707070;border-radius:3px;background:linear-gradient(#f2f2f2,#ebebeb 48%,#dddddd 52%,#cfcfcf);box-shadow:inset 0 0 0 1px #fcfcfc;border-color:#6a6a6a"></div>
<span class="t" style="left:781px;top:919px;font-size:12px;letter-spacing:-0.7px">WARNING</span>
<svg style="left:908px;top:925px;" width="8" height="5" viewBox="0 0 8 5"><path d="M0 0H8L4 4.6Z" fill="#000"/></svg>
<span class="t" style="left:927.5px;top:918.8px;letter-spacing:-0.62px">Revision:</span>
<div style="left:982.7px;top:917.6px;width:303.5px;height:20.6px;background:#fff;border:1px solid #e3e3e3;border-top-color:#bcbcbc;border-left-color:#dcdcdc"></div>
<span class="t" style="left:986px;top:918.8px;color:#9a9a9a">current</span>
<div style="left:1294.5px;top:861px;width:300.1px;height:46.5px;border:1px solid #707070;border-radius:3px;background:linear-gradient(#f2f2f2,#ebebeb 48%,#dddddd 52%,#cfcfcf);box-shadow:inset 0 0 0 1px #fcfcfc;"></div>
<svg style="left:1415.5px;top:874.5px;" width="18" height="17" viewBox="0 0 18 17"><path d="M11 1.5h5.5v7.2c0 2-1.2 3.2-3.2 3.2H7.6v3.2L1.2 10.2l6.4-5v3.2h3.4z" fill="#6b8c4a" stroke="#3f5a28" stroke-width=".9" stroke-linejoin="round"/><path d="M11.6 2.2h4.2v3h-4.2z" fill="#9ab87a" opacity=".7"/></svg>
<span class="t" style="left:1436.5px;top:875.3px;">Submit</span>
<div style="left:1294.5px;top:916px;width:300.1px;height:23.2px;border:1px solid #707070;border-radius:3px;background:linear-gradient(#f2f2f2,#ebebeb 48%,#dddddd 52%,#cfcfcf);box-shadow:inset 0 0 0 1px #fcfcfc;"></div>
<svg style="left:1381.5px;top:919.3px;" width="17" height="17" viewBox="0 0 17 17"><path d="M2.2 2.5c1.2-.8 2.4-.9 3.3.2L8 6.4l3.8-4.6c.8-.9 2-.6 2.8.2L10 8.4l4.2 6.2c-1 .9-2.3 1-3.2-.1L8 10.6l-3.6 4.6c-.8.8-2 .7-2.8-.2l4.6-6.4z" fill="#b03a3a" stroke="#6e1f1f" stroke-width=".8" stroke-linejoin="round"/></svg>
<span class="t" style="left:1401.3px;top:919.1px;">Terminate instances</span>
<div style="left:559px;top:1154.4px;width:176.3px;height:27.5px;border:1px solid #5e6670;border-radius:7px 7px 0 0;background:linear-gradient(#c5d3e8,#d3dff0 40%,#dde6f3);box-shadow:inset 0 0 0 1px rgba(255,255,255,.6)"></div>
<svg style="left:569px;top:1163px;" width="18" height="18" viewBox="0 0 18 18"><path d="M4.5 1.2h8l3.3 3.3v12.3h-11.3z" fill="#fdfdfd" stroke="#1a1a1a" stroke-width="1.3" stroke-linejoin="round"/><path d="M12.5 1.2v3.3h3.3" fill="#ddd" stroke="#1a1a1a" stroke-width="1"/><path d="M8.5 6.2h5M9.5 8.3h4.5M9.5 10.4h4.5M6.5 12.5h7.5M6.5 14.5h7.5" stroke="#444" stroke-width="1"/><path d="M2.8 11.2L0.8 14" stroke="#3a2a30" stroke-width="1.8" stroke-linecap="round"/><circle cx="5.6" cy="7.4" r="3.9" fill="#9cc4f2" stroke="#27436b" stroke-width="1.2"/><circle cx="5" cy="6.6" r="1.6" fill="#d6e8fb" opacity=".8"/></svg>
<span class="s" style="left:590.5px;top:1164.8px;color:#6d6d80;font-size:13.5px">rep...</span>
<div style="left:621.5px;top:1160.5px;width:33px;height:18px;border:1px solid #8b9ab3;border-radius:2px;background:linear-gradient(#d3deee,#c4d2e8 50%,#b7c8e2 51%,#c6d4ea)"></div>
<svg style="left:631px;top:1163.5px;" width="14" height="12" viewBox="0 0 14 12"><rect x="5" y="1" width="8" height="6" fill="#d0dcee" stroke="#5a6577" stroke-width="1.2"/><rect x="1" y="4.5" width="8" height="6" fill="#e4ebf5" stroke="#5a6577" stroke-width="1.2"/><rect x="3.3" y="6.8" width="3.4" height="1.6" fill="#5a6577"/></svg>
<div style="left:658.2px;top:1160.5px;width:33px;height:18px;border:1px solid #8b9ab3;border-radius:2px;background:linear-gradient(#d3deee,#c4d2e8 50%,#b7c8e2 51%,#c6d4ea)"></div>
<svg style="left:668.7px;top:1164px;" width="12" height="11" viewBox="0 0 12 11"><rect x="1" y="1" width="10" height="8.4" fill="#eef2f8" stroke="#5a6577" stroke-width="1.2"/><rect x="3.6" y="3.8" width="4.8" height="2.6" fill="none" stroke="#5a6577" stroke-width="1.1"/></svg>
<div style="left:694.9px;top:1160.5px;width:33px;height:18px;border:1px solid #8b9ab3;border-radius:2px;background:linear-gradient(#d3deee,#c4d2e8 50%,#b7c8e2 51%,#c6d4ea)"></div>
<svg style="left:705.4px;top:1164.3px;" width="12" height="10" viewBox="0 0 12 10"><path d="M1.8 1.4L10.2 8.6M10.2 1.4L1.8 8.6" stroke="#5a6577" stroke-width="3.8"/><path d="M2.2 1.8L9.8 8.2M9.8 1.8L2.2 8.2" stroke="#f4f6fb" stroke-width="2"/></svg>
<div style="left:736.6px;top:1154.4px;width:175.6px;height:27.5px;border:1px solid #5e6670;border-radius:7px 7px 0 0;background:linear-gradient(#c5d3e8,#d3dff0 40%,#dde6f3);box-shadow:inset 0 0 0 1px rgba(255,255,255,.6)"></div>
<svg style="left:746.6px;top:1163px;" width="18" height="18" viewBox="0 0 18 18"><path d="M4.5 1.2h8l3.3 3.3v12.3h-11.3z" fill="#fdfdfd" stroke="#1a1a1a" stroke-width="1.3" stroke-linejoin="round"/><path d="M12.5 1.2v3.3h3.3" fill="#ddd" stroke="#1a1a1a" stroke-width="1"/><path d="M8.5 6.2h5M9.5 8.3h4.5M9.5 10.4h4.5M6.5 12.5h7.5M6.5 14.5h7.5" stroke="#444" stroke-width="1"/><path d="M2.8 11.2L0.8 14" stroke="#3a2a30" stroke-width="1.8" stroke-linecap="round"/><circle cx="5.6" cy="7.4" r="3.9" fill="#9cc4f2" stroke="#27436b" stroke-width="1.2"/><circle cx="5" cy="6.6" r="1.6" fill="#d6e8fb" opacity=".8"/></svg>
<span class="s" style="left:768.1px;top:1164.8px;color:#6d6d80;font-size:13.5px">rep...</span>
<div style="left:799.1px;top:1160.5px;width:33px;height:18px;border:1px solid #8b9ab3;border-radius:2px;background:linear-gradient(#d3deee,#c4d2e8 50%,#b7c8e2 51%,#c6d4ea)"></div>
<svg style="left:808.6px;top:1163.5px;" width="14" height="12" viewBox="0 0 14 12"><rect x="5" y="1" width="8" height="6" fill="#d0dcee" stroke="#5a6577" stroke-width="1.2"/><rect x="1" y="4.5" width="8" height="6" fill="#e4ebf5" stroke="#5a6577" stroke-width="1.2"/><rect x="3.3" y="6.8" width="3.4" height="1.6" fill="#5a6577"/></svg>
<div style="left:835.8px;top:1160.5px;width:33px;height:18px;border:1px solid #8b9ab3;border-radius:2px;background:linear-gradient(#d3deee,#c4d2e8 50%,#b7c8e2 51%,#c6d4ea)"></div>
<svg style="left:846.3px;top:1164px;" width="12" height="11" viewBox="0 0 12 11"><rect x="1" y="1" width="10" height="8.4" fill="#eef2f8" stroke="#5a6577" stroke-width="1.2"/><rect x="3.6" y="3.8" width="4.8" height="2.6" fill="none" stroke="#5a6577" stroke-width="1.1"/></svg>
<div style="left:872.5px;top:1160.5px;width:33px;height:18px;border:1px solid #8b9ab3;border-radius:2px;background:linear-gradient(#d3deee,#c4d2e8 50%,#b7c8e2 51%,#c6d4ea)"></div>
<svg style="left:883px;top:1164.3px;" width="12" height="10" viewBox="0 0 12 10"><path d="M1.8 1.4L10.2 8.6M10.2 1.4L1.8 8.6" stroke="#5a6577" stroke-width="3.8"/><path d="M2.2 1.8L9.8 8.2M9.8 1.8L2.2 8.2" stroke="#f4f6fb" stroke-width="2"/></svg>
<div style="left:984.5px;top:956.7px;width:776.1px;height:509.6px;border:1px solid #5a5a5a;background:#dbe5f3;box-shadow:inset 0 0 0 1px rgba(255,255,255,.7)"></div>
<div style="left:986.5px;top:958.7px;width:772.1px;height:26.9px;background:linear-gradient(#c9d6ea,#d9e4f3)"></div>
<span class="t" style="left:993.6px;top:964.9px;color:#5b5b6b;font-size:13.2px;letter-spacing:-0.29px">Applet: TDC sigma_p_h Scan</span>
<div style="left:1735.9px;top:967.5px;width:14.3px;height:14.5px;border:1px solid #7d8696;border-radius:2px;background:#e6ecf5"></div>
<svg style="left:1738.5px;top:970.2px;" width="9" height="9" viewBox="0 0 9 9"><rect x=".6" y=".6" width="7.8" height="7.8" fill="none" stroke="#555" stroke-width="1.1"/><path d="M2.3 2.3L6.7 6.7M6.7 2.3L2.3 6.7" stroke="#555" stroke-width="1.3"/></svg>
<div style="left:993.1px;top:985.6px;width:758.5px;height:472.6px;background:#fff"></div>
<svg style="left:993.1px;top:985.6px;" width="758.5" height="472.6" viewBox="0 0 758.5 472.6"><path d="M103.5 0V382.6H758.5" fill="none" stroke="#000" stroke-width="1.1"/><path d="M103.5 30.9h4" stroke="#666" stroke-width="1"/><text x="70.5" y="38.8" text-anchor="end" class="pt">3.8</text><path d="M103.5 62.83h4" stroke="#666" stroke-width="1"/><text x="70.5" y="70.73" text-anchor="end" class="pt">3.6</text><path d="M103.5 94.76h4" stroke="#666" stroke-width="1"/><text x="70.5" y="102.66" text-anchor="end" class="pt">3.4</text><path d="M103.5 126.69h4" stroke="#666" stroke-width="1"/><text x="70.5" y="134.59" text-anchor="end" class="pt">3.2</text><path d="M103.5 158.62h5.4" stroke="#222" stroke-width="1"/><text x="70.5" y="166.52" text-anchor="end" class="pt">3</text><path d="M103.5 190.55h4" stroke="#666" stroke-width="1"/><text x="70.5" y="198.45" text-anchor="end" class="pt">2.8</text><path d="M103.5 222.48h4" stroke="#666" stroke-width="1"/><text x="70.5" y="230.38" text-anchor="end" class="pt">2.6</text><path d="M103.5 254.41h4" stroke="#666" stroke-width="1"/><text x="70.5" y="262.31" text-anchor="end" class="pt">2.4</text><path d="M103.5 286.34h4" stroke="#666" stroke-width="1"/><text x="70.5" y="294.24" text-anchor="end" class="pt">2.2</text><path d="M103.5 318.27h5.4" stroke="#222" stroke-width="1"/><text x="70.5" y="326.17" text-anchor="end" class="pt">2</text><path d="M103.5 350.2h4" stroke="#666" stroke-width="1"/><text x="70.5" y="358.1" text-anchor="end" class="pt">1.8</text><text x="70.5" y="390.03" text-anchor="end" class="pt">1.6</text><path d="M105.1 382.6v-5.4" stroke="#222" stroke-width="1"/><text x="105.1" y="428.6" text-anchor="middle" class="pt">395000</text><path d="M191.85 382.6v-4" stroke="#666" stroke-width="1"/><path d="M278.6 382.6v-5.4" stroke="#222" stroke-width="1"/><text x="278.6" y="428.6" text-anchor="middle" class="pt">395200</text><path d="M365.35 382.6v-4" stroke="#666" stroke-width="1"/><path d="M452.1 382.6v-5.4" stroke="#222" stroke-width="1"/><text x="452.1" y="428.6" text-anchor="middle" class="pt">395400</text><path d="M538.85 382.6v-4" stroke="#666" stroke-width="1"/><path d="M625.6 382.6v-5.4" stroke="#222" stroke-width="1"/><text x="625.6" y="428.6" text-anchor="middle" class="pt">395600</text><path d="M712.35 382.6v-4" stroke="#666" stroke-width="1"/><text x="424.8" y="463" text-anchor="middle" class="pl">sigma_p_h_position</text><text transform="translate(30.4 195.3) rotate(-90) scale(1 1.2)" text-anchor="middle" class="pl" style="font-size:25px">counts</text><circle cx="136.1" cy="320.91" r="5.65" fill="#2f2f8c" stroke="#eceef8" stroke-width="0.8"/><circle cx="148.47" cy="320.91" r="5.65" fill="#2f2f8c" stroke="#eceef8" stroke-width="0.8"/><circle cx="141.73" cy="297.3" r="5.65" fill="#2f2f8c" stroke="#eceef8" stroke-width="0.8"/><circle cx="153.72" cy="284.18" r="5.65" fill="#2f2f8c" stroke="#eceef8" stroke-width="0.8"/><circle cx="159.35" cy="330.66" r="5.65" fill="#2f2f8c" stroke="#eceef8" stroke-width="0.8"/><circle cx="166.09" cy="301.04" r="5.65" fill="#2f2f8c" stroke="#eceef8" stroke-width="0.8"/><circle cx="171.72" cy="283.43" r="5.65" fill="#2f2f8c" stroke="#eceef8" stroke-width="0.8"/><circle cx="176.97" cy="292.42" r="5.65" fill="#2f2f8c" stroke="#eceef8" stroke-width="0.8"/><circle cx="183.71" cy="304.42" r="5.65" fill="#2f2f8c" stroke="#eceef8" stroke-width="0.8"/><circle cx="189.34" cy="276.3" r="5.65" fill="#2f2f8c" stroke="#eceef8" stroke-width="0.8"/><circle cx="196.08" cy="265.81" r="5.65" fill="#2f2f8c" stroke="#eceef8" stroke-width="0.8"/><circle cx="201.33" cy="240.69" r="5.65" fill="#2f2f8c" stroke="#eceef8" stroke-width="0.8"/><circle cx="206.96" cy="284.55" r="5.65" fill="#2f2f8c" stroke="#eceef8" stroke-width="0.8"/><circle cx="213.33" cy="266.56" r="5.65" fill="#2f2f8c" stroke="#eceef8" stroke-width="0.8"/><circle cx="218.95" cy="212.57" r="5.65" fill="#2f2f8c" stroke="#eceef8" stroke-width="0.8"/><circle cx="225.7" cy="261.68" r="5.65" fill="#2f2f8c" stroke="#eceef8" stroke-width="0.8"/><circle cx="230.95" cy="214.82" r="5.65" fill="#2f2f8c" stroke="#eceef8" stroke-width="0.8"/><circle cx="236.57" cy="144.34" r="5.65" fill="#2f2f8c" stroke="#eceef8" stroke-width="0.8"/><circle cx="243.69" cy="198.7" r="5.65" fill="#2f2f8c" stroke="#eceef8" stroke-width="0.8"/><circle cx="249.32" cy="195.7" r="5.65" fill="#2f2f8c" stroke="#eceef8" stroke-width="0.8"/><circle cx="255.69" cy="208.45" r="5.65" fill="#2f2f8c" stroke="#eceef8" stroke-width="0.8"/><circle cx="260.94" cy="151.84" r="5.65" fill="#2f2f8c" stroke="#eceef8" stroke-width="0.8"/><circle cx="266.56" cy="187.46" r="5.65" fill="#2f2f8c" stroke="#eceef8" stroke-width="0.8"/><circle cx="272.94" cy="219.32" r="5.65" fill="#2f2f8c" stroke="#eceef8" stroke-width="0.8"/><circle cx="278.56" cy="209.57" r="5.65" fill="#2f2f8c" stroke="#eceef8" stroke-width="0.8"/><circle cx="284.18" cy="139.85" r="5.65" fill="#2f2f8c" stroke="#eceef8" stroke-width="0.8"/><circle cx="290.93" cy="165.34" r="5.65" fill="#2f2f8c" stroke="#eceef8" stroke-width="0.8"/><circle cx="296.18" cy="83.61" r="5.65" fill="#2f2f8c" stroke="#eceef8" stroke-width="0.8"/><circle cx="302.93" cy="187.46" r="5.65" fill="#2f2f8c" stroke="#eceef8" stroke-width="0.8"/><circle cx="308.55" cy="195.33" r="5.65" fill="#2f2f8c" stroke="#eceef8" stroke-width="0.8"/><circle cx="314.17" cy="161.96" r="5.65" fill="#2f2f8c" stroke="#eceef8" stroke-width="0.8"/><circle cx="320.55" cy="154.47" r="5.65" fill="#2f2f8c" stroke="#eceef8" stroke-width="0.8"/><circle cx="326.17" cy="118.48" r="5.65" fill="#2f2f8c" stroke="#eceef8" stroke-width="0.8"/><circle cx="332.54" cy="151.84" r="5.65" fill="#2f2f8c" stroke="#eceef8" stroke-width="0.8"/><circle cx="338.54" cy="136.47" r="5.65" fill="#2f2f8c" stroke="#eceef8" stroke-width="0.8"/><circle cx="343.79" cy="82.49" r="5.65" fill="#2f2f8c" stroke="#eceef8" stroke-width="0.8"/><circle cx="350.54" cy="155.59" r="5.65" fill="#2f2f8c" stroke="#eceef8" stroke-width="0.8"/><circle cx="355.78" cy="54.75" r="5.65" fill="#2f2f8c" stroke="#eceef8" stroke-width="0.8"/><circle cx="361.78" cy="57" r="5.65" fill="#2f2f8c" stroke="#eceef8" stroke-width="0.8"/><circle cx="368.16" cy="126.35" r="5.65" fill="#2f2f8c" stroke="#eceef8" stroke-width="0.8"/><circle cx="373.78" cy="123.73" r="5.65" fill="#2f2f8c" stroke="#eceef8" stroke-width="0.8"/><circle cx="380.15" cy="139.47" r="5.65" fill="#2f2f8c" stroke="#eceef8" stroke-width="0.8"/><circle cx="385.78" cy="116.6" r="5.65" fill="#2f2f8c" stroke="#eceef8" stroke-width="0.8"/><circle cx="391.4" cy="126.35" r="5.65" fill="#2f2f8c" stroke="#eceef8" stroke-width="0.8"/><circle cx="398.15" cy="143.22" r="5.65" fill="#2f2f8c" stroke="#eceef8" stroke-width="0.8"/><circle cx="403.39" cy="88.11" r="5.65" fill="#2f2f8c" stroke="#eceef8" stroke-width="0.8"/><circle cx="410.14" cy="82.49" r="5.65" fill="#2f2f8c" stroke="#eceef8" stroke-width="0.8"/><circle cx="415.77" cy="36" r="5.65" fill="#2f2f8c" stroke="#eceef8" stroke-width="0.8"/><circle cx="421.39" cy="82.49" r="5.65" fill="#2f2f8c" stroke="#eceef8" stroke-width="0.8"/><circle cx="427.76" cy="114.35" r="5.65" fill="#2f2f8c" stroke="#eceef8" stroke-width="0.8"/><circle cx="433.39" cy="83.61" r="5.65" fill="#2f2f8c" stroke="#eceef8" stroke-width="0.8"/><circle cx="439.01" cy="51.37" r="5.65" fill="#2f2f8c" stroke="#eceef8" stroke-width="0.8"/><circle cx="445.38" cy="100.11" r="5.65" fill="#2f2f8c" stroke="#eceef8" stroke-width="0.8"/><circle cx="451" cy="26.26" r="5.65" fill="#2f2f8c" stroke="#eceef8" stroke-width="0.8"/><circle cx="457.75" cy="97.86" r="5.65" fill="#2f2f8c" stroke="#eceef8" stroke-width="0.8"/><circle cx="463.75" cy="93.36" r="5.65" fill="#2f2f8c" stroke="#eceef8" stroke-width="0.8"/><circle cx="469" cy="42.75" r="5.65" fill="#2f2f8c" stroke="#eceef8" stroke-width="0.8"/><circle cx="475.37" cy="83.61" r="5.65" fill="#2f2f8c" stroke="#eceef8" stroke-width="0.8"/><circle cx="481" cy="118.85" r="5.65" fill="#2f2f8c" stroke="#eceef8" stroke-width="0.8"/><circle cx="487.37" cy="50.62" r="5.65" fill="#2f2f8c" stroke="#eceef8" stroke-width="0.8"/><circle cx="492.62" cy="48.37" r="5.65" fill="#2f2f8c" stroke="#eceef8" stroke-width="0.8"/><circle cx="498.62" cy="37.5" r="5.65" fill="#2f2f8c" stroke="#eceef8" stroke-width="0.8"/><circle cx="505.36" cy="73.49" r="5.65" fill="#2f2f8c" stroke="#eceef8" stroke-width="0.8"/><circle cx="510.61" cy="104.23" r="5.65" fill="#2f2f8c" stroke="#eceef8" stroke-width="0.8"/><circle cx="516.23" cy="114.35" r="5.65" fill="#2f2f8c" stroke="#eceef8" stroke-width="0.8"/><circle cx="522.98" cy="107.98" r="5.65" fill="#2f2f8c" stroke="#eceef8" stroke-width="0.8"/><circle cx="528.61" cy="105.73" r="5.65" fill="#2f2f8c" stroke="#eceef8" stroke-width="0.8"/><circle cx="534.98" cy="144.34" r="5.65" fill="#2f2f8c" stroke="#eceef8" stroke-width="0.8"/><circle cx="540.6" cy="82.11" r="5.65" fill="#2f2f8c" stroke="#eceef8" stroke-width="0.8"/><circle cx="545.85" cy="88.11" r="5.65" fill="#2f2f8c" stroke="#eceef8" stroke-width="0.8"/><circle cx="552.6" cy="123.35" r="5.65" fill="#2f2f8c" stroke="#eceef8" stroke-width="0.8"/><circle cx="558.22" cy="58.12" r="5.65" fill="#2f2f8c" stroke="#eceef8" stroke-width="0.8"/><circle cx="564.59" cy="118.85" r="5.65" fill="#2f2f8c" stroke="#eceef8" stroke-width="0.8"/><circle cx="570.22" cy="136.85" r="5.65" fill="#2f2f8c" stroke="#eceef8" stroke-width="0.8"/><circle cx="575.84" cy="159.34" r="5.65" fill="#2f2f8c" stroke="#eceef8" stroke-width="0.8"/><circle cx="582.21" cy="137.22" r="5.65" fill="#2f2f8c" stroke="#eceef8" stroke-width="0.8"/><circle cx="587.84" cy="134.22" r="5.65" fill="#2f2f8c" stroke="#eceef8" stroke-width="0.8"/><circle cx="594.59" cy="155.22" r="5.65" fill="#2f2f8c" stroke="#eceef8" stroke-width="0.8"/><circle cx="600.21" cy="184.08" r="5.65" fill="#2f2f8c" stroke="#eceef8" stroke-width="0.8"/><circle cx="605.83" cy="186.33" r="5.65" fill="#2f2f8c" stroke="#eceef8" stroke-width="0.8"/><circle cx="612.2" cy="168.34" r="5.65" fill="#2f2f8c" stroke="#eceef8" stroke-width="0.8"/><circle cx="617.83" cy="214.82" r="5.65" fill="#2f2f8c" stroke="#eceef8" stroke-width="0.8"/><circle cx="623.83" cy="188.58" r="5.65" fill="#2f2f8c" stroke="#eceef8" stroke-width="0.8"/><circle cx="629.82" cy="230.19" r="5.65" fill="#2f2f8c" stroke="#eceef8" stroke-width="0.8"/><circle cx="635.82" cy="223.44" r="5.65" fill="#2f2f8c" stroke="#eceef8" stroke-width="0.8"/><circle cx="642.2" cy="180.33" r="5.65" fill="#2f2f8c" stroke="#eceef8" stroke-width="0.8"/><circle cx="648.19" cy="214.82" r="5.65" fill="#2f2f8c" stroke="#eceef8" stroke-width="0.8"/><circle cx="653.44" cy="212.57" r="5.65" fill="#2f2f8c" stroke="#eceef8" stroke-width="0.8"/><circle cx="659.81" cy="254.18" r="5.65" fill="#2f2f8c" stroke="#eceef8" stroke-width="0.8"/><circle cx="665.81" cy="244.06" r="5.65" fill="#2f2f8c" stroke="#eceef8" stroke-width="0.8"/><circle cx="671.81" cy="240.69" r="5.65" fill="#2f2f8c" stroke="#eceef8" stroke-width="0.8"/><circle cx="678.18" cy="258.68" r="5.65" fill="#2f2f8c" stroke="#eceef8" stroke-width="0.8"/><circle cx="683.43" cy="265.06" r="5.65" fill="#2f2f8c" stroke="#eceef8" stroke-width="0.8"/><circle cx="689.81" cy="308.17" r="5.65" fill="#2f2f8c" stroke="#eceef8" stroke-width="0.8"/><circle cx="695.05" cy="335.53" r="5.65" fill="#2f2f8c" stroke="#eceef8" stroke-width="0.8"/><circle cx="701.05" cy="330.66" r="5.65" fill="#2f2f8c" stroke="#eceef8" stroke-width="0.8"/><circle cx="707.42" cy="337.41" r="5.65" fill="#2f2f8c" stroke="#eceef8" stroke-width="0.8"/><circle cx="713.05" cy="324.29" r="5.65" fill="#2f2f8c" stroke="#eceef8" stroke-width="0.8"/><circle cx="719.8" cy="313.04" r="5.65" fill="#2f2f8c" stroke="#eceef8" stroke-width="0.8"/><circle cx="725.04" cy="347.16" r="5.65" fill="#2f2f8c" stroke="#eceef8" stroke-width="0.8"/><path d="M136.1 361.78L143.48 348.56L150.86 335.67L158.23 323.11L165.61 310.86L172.98 298.94L180.36 287.35L187.73 276.08L195.11 265.13L202.49 254.5L209.86 244.2L217.24 234.22L224.61 224.56L231.99 215.23L239.36 206.22L246.74 197.53L254.12 189.16L261.49 181.12L268.87 173.41L276.24 166.01L283.62 158.94L291 152.2L298.37 145.77L305.75 139.67L313.12 133.89L320.5 128.44L327.87 123.31L335.25 118.5L342.63 114.02L350 109.85L357.38 106.02L364.75 102.5L372.13 99.31L379.51 96.44L386.88 93.9L394.26 91.68L401.63 89.78L409.01 88.2L416.38 86.95L423.76 86.02L431.14 85.42L438.51 85.13L445.89 85.18L453.26 85.57L460.64 86.3L468.02 87.37L475.39 88.79L482.77 90.55L490.14 92.66L497.52 95.11L504.89 97.9L512.27 101.04L519.65 104.52L527.02 108.35L534.4 112.52L541.77 117.03L549.15 121.88L556.53 127.08L563.9 132.63L571.28 138.51L578.65 144.74L586.03 151.32L593.4 158.24L600.78 165.5L608.16 173.1L615.53 181.05L622.91 189.34L630.28 197.98L637.66 206.96L645.03 216.28L652.41 225.95L659.79 235.96L667.16 246.32L674.54 257.02L681.91 268.06L689.29 279.45L696.67 291.18L704.04 303.25L711.42 315.67L718.79 328.43L726.17 341.53" fill="none" stroke="#d60000" stroke-width="3.9" stroke-linejoin="round"/></svg></body></html>
